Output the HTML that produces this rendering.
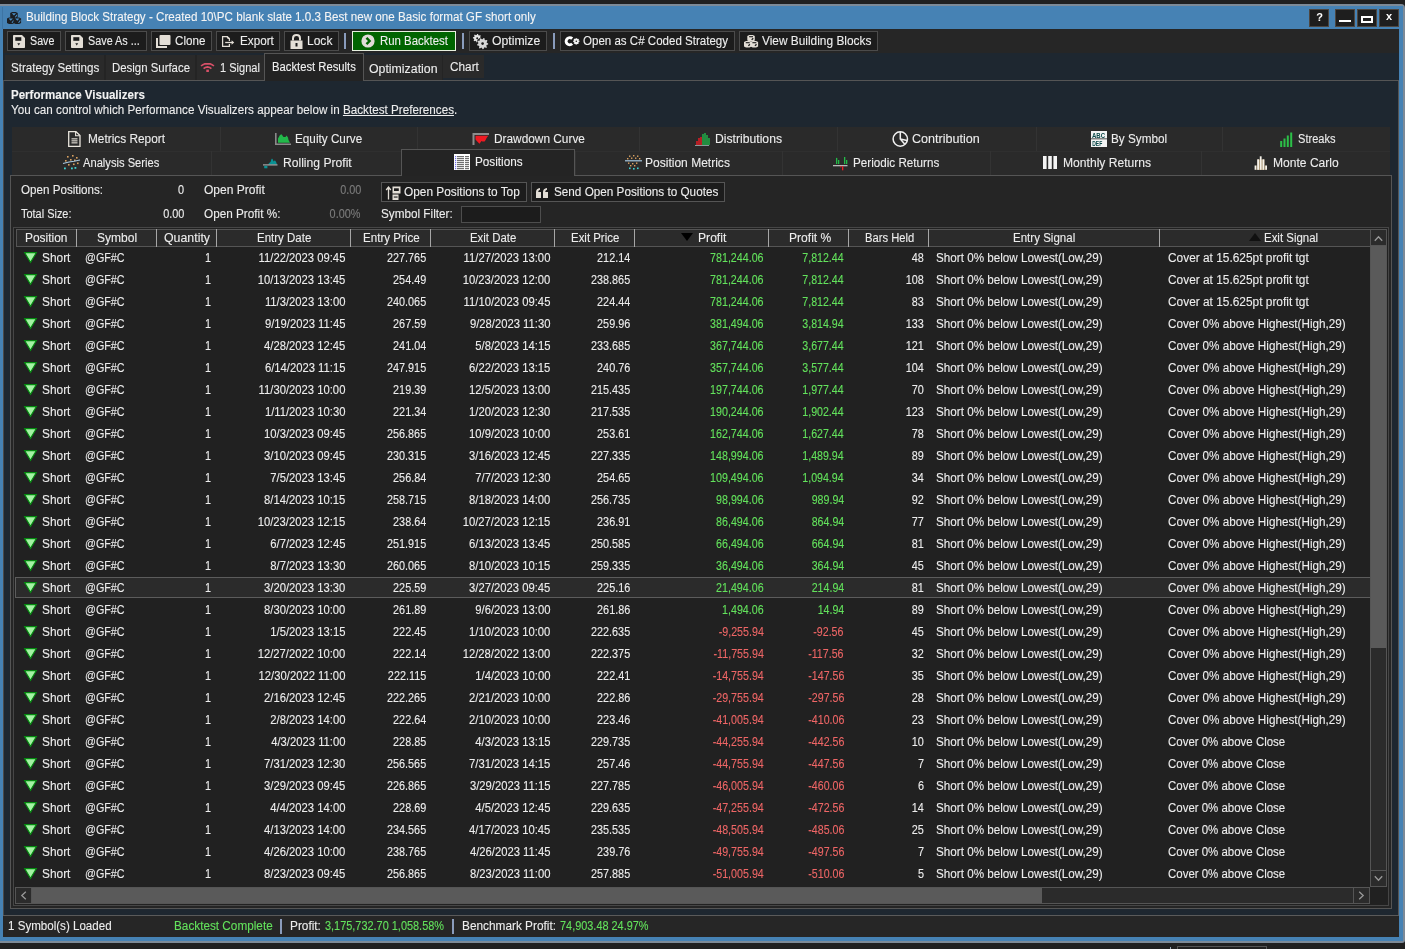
<!DOCTYPE html>
<html><head><meta charset="utf-8"><title>Building Block Strategy</title><style>
*{margin:0;padding:0;box-sizing:border-box}
html,body{width:1405px;height:949px;overflow:hidden;background:#202020;font-family:"Liberation Sans", sans-serif;}
.a{position:absolute}
.t{position:absolute;font-size:12.5px;line-height:14px;white-space:nowrap;color:#ededed;-webkit-text-stroke:0.1px currentColor}
svg{position:absolute;overflow:visible}
</style></head><body>
<div id="root" style="position:absolute;left:0;top:0;width:1405px;height:949px;overflow:hidden;will-change:transform">
<div class="a" style="left:-5px;top:4px;width:1410px;height:939px;background:#7d8a97;border-top-right-radius:4px;border-bottom-right-radius:3px"></div>
<div class="a" style="left:-5px;top:6px;width:1408px;height:935px;background:#4682b4"></div>
<div class="a" style="left:2px;top:7px;width:1px;height:22px;background:#3d74a3"></div>
<div class="a" style="left:1177px;top:946px;width:90px;height:10px;border:1px solid #555;"></div>
<div class="a" style="left:1170px;top:947px;width:1px;height:4px;background:#9ab"></div>
<svg style="left:7px;top:12px" width="15" height="13" viewBox="0 0 15 13"><g transform="translate(3.2,0)"><path d="M0 1 L2 0 L5.5 0 L7.5 1 L7.5 5.5 L5.5 6.6 L2 6.6 L0 5.5 Z" fill="#1b1e22"/><path d="M1.6 1.2 L5.9 1.2 L3.75 3.4 Z" fill="#4a90c8"/><path d="M4.6 5 L6.6 2.4 L6.9 3.7 L5.2 5.9 Z" fill="#4a90c8"/></g><g transform="translate(0,5.4)"><path d="M0 1 L2 0 L5.5 0 L7.5 1 L7.5 5.5 L5.5 6.6 L2 6.6 L0 5.5 Z" fill="#1b1e22"/><path d="M1.6 1.2 L5.9 1.2 L3.75 3.4 Z" fill="#4a90c8"/><path d="M4.6 5 L6.6 2.4 L6.9 3.7 L5.2 5.9 Z" fill="#4a90c8"/></g><g transform="translate(6.6,5.4)"><path d="M0 1 L2 0 L5.5 0 L7.5 1 L7.5 5.5 L5.5 6.6 L2 6.6 L0 5.5 Z" fill="#1b1e22"/><path d="M1.6 1.2 L5.9 1.2 L3.75 3.4 Z" fill="#4a90c8"/><path d="M4.6 5 L6.6 2.4 L6.9 3.7 L5.2 5.9 Z" fill="#4a90c8"/></g></svg>
<div class="t" style="font-size:12.5px;top:9.67px;color:#f4f4f4;left:25.80px;transform:scaleX(0.9310);transform-origin:0 0;">Building Block Strategy - Created 10\PC blank slate 1.0.3 Best new one Basic format GF short only</div>
<div class="a" style="left:1309px;top:9px;width:20px;height:18px;background:#1e1e1e;border:1px solid #4d4640"></div>
<div class="a" style="left:1335px;top:9px;width:20px;height:18px;background:#1e1e1e;border:1px solid #4d4640"></div>
<div class="a" style="left:1357px;top:9px;width:20px;height:18px;background:#1e1e1e;border:1px solid #4d4640"></div>
<div class="a" style="left:1379px;top:9px;width:20px;height:18px;background:#1e1e1e;border:1px solid #4d4640"></div>
<div class="a" style="left:1309px;top:9px;width:20px;height:17px;color:#fff;font:bold 11px/17px 'Liberation Sans',sans-serif;text-align:center;padding-left:1px">?</div>
<div class="a" style="left:1339px;top:19.5px;width:12px;height:2.5px;background:#fff"></div>
<div class="a" style="left:1361px;top:15.5px;width:12px;height:7.5px;border:2px solid #fff"></div>
<div class="a" style="left:1379px;top:8px;width:20px;height:17px;color:#fff;font:bold 11px/17px 'Liberation Sans',sans-serif;text-align:center">x</div>
<div class="a" style="left:3px;top:52px;width:1396px;height:863px;background:#1e2730"></div>
<div class="a" style="left:3px;top:29px;width:1396px;height:24px;background:#262626"></div>
<div class="a" style="left:7px;top:31px;width:54px;height:20px;background:#1c1c1c;border:1px solid #4b4b4b"></div>
<div class="t" style="font-size:12.5px;top:33.67px;color:#eeeeee;left:30.20px;transform:scaleX(0.8561);transform-origin:0 0;">Save</div>
<div class="a" style="left:65px;top:31px;width:82px;height:20px;background:#1c1c1c;border:1px solid #4b4b4b"></div>
<div class="t" style="font-size:12.5px;top:33.67px;color:#eeeeee;left:88.30px;transform:scaleX(0.8653);transform-origin:0 0;">Save As ...</div>
<div class="a" style="left:151px;top:31px;width:61px;height:20px;background:#1c1c1c;border:1px solid #4b4b4b"></div>
<div class="t" style="font-size:12.5px;top:33.67px;color:#eeeeee;left:174.90px;transform:scaleX(0.9305);transform-origin:0 0;">Clone</div>
<div class="a" style="left:216px;top:31px;width:64px;height:20px;background:#1c1c1c;border:1px solid #4b4b4b"></div>
<div class="t" style="font-size:12.5px;top:33.67px;color:#eeeeee;left:239.70px;transform:scaleX(0.9356);transform-origin:0 0;">Export</div>
<div class="a" style="left:284px;top:31px;width:55px;height:20px;background:#1c1c1c;border:1px solid #4b4b4b"></div>
<div class="t" style="font-size:12.5px;top:33.67px;color:#eeeeee;left:307.30px;transform:scaleX(0.9619);transform-origin:0 0;">Lock</div>
<div class="a" style="left:344px;top:33px;width:2px;height:16px;background:#8a9cbc"></div>
<div class="a" style="left:352px;top:31px;width:104px;height:20px;background:#006400;border:1px solid #e8f0e0"></div>
<div class="t" style="font-size:12.5px;top:33.67px;color:#eeeeee;left:379.60px;transform:scaleX(0.9133);transform-origin:0 0;">Run Backtest</div>
<div class="a" style="left:462px;top:33px;width:2px;height:16px;background:#8a9cbc"></div>
<div class="a" style="left:469px;top:31px;width:78px;height:20px;background:#1c1c1c;border:1px solid #4b4b4b"></div>
<div class="t" style="font-size:12.5px;top:33.67px;color:#eeeeee;left:492.40px;transform:scaleX(0.9774);transform-origin:0 0;">Optimize</div>
<div class="a" style="left:553px;top:33px;width:2px;height:16px;background:#8a9cbc"></div>
<div class="a" style="left:560px;top:31px;width:175px;height:20px;background:#1c1c1c;border:1px solid #4b4b4b"></div>
<div class="t" style="font-size:12.5px;top:33.67px;color:#eeeeee;left:583.40px;transform:scaleX(0.9234);transform-origin:0 0;">Open as C# Coded Strategy</div>
<div class="a" style="left:739px;top:31px;width:139px;height:20px;background:#1c1c1c;border:1px solid #4b4b4b"></div>
<div class="t" style="font-size:12.5px;top:33.67px;color:#eeeeee;left:761.80px;transform:scaleX(0.9500);transform-origin:0 0;">View Building Blocks</div>
<svg style="left:12.6px;top:35px" width="12" height="13" viewBox="0 0 12 13"><path d="M0 0.8 Q0 0 0.8 0 L9 0 L12 3 L12 12.2 Q12 13 11.2 13 L0.8 13 Q0 13 0 12.2Z" fill="#e3ded6"/><rect x="2.3" y="2.2" width="6" height="3.6" fill="#1c1c1c"/><path d="M4.3 8.3 L7.2 8.3 L5.75 10.6Z" fill="#1c1c1c"/></svg>
<svg style="left:70.6px;top:35px" width="12" height="13" viewBox="0 0 12 13"><path d="M0 0.8 Q0 0 0.8 0 L9 0 L12 3 L12 12.2 Q12 13 11.2 13 L0.8 13 Q0 13 0 12.2Z" fill="#e3ded6"/><rect x="2.3" y="2.2" width="6" height="3.6" fill="#1c1c1c"/><path d="M4.3 8.3 L7.2 8.3 L5.75 10.6Z" fill="#1c1c1c"/></svg>
<svg style="left:155.5px;top:35px" width="15" height="13" viewBox="0 0 15 13"><path d="M0 3 L0 13 L11 13 L11 11 L2 11 L2 3Z" fill="#e3ded6"/><rect x="3.5" y="0" width="11" height="10" rx="1" fill="#e3ded6"/></svg>
<svg style="left:222px;top:36px" width="13" height="11" viewBox="0 0 13 11"><path d="M7.4 5 L7.4 2.5 L5.3 0.6 L0.6 0.6 L0.6 10.4 L7.4 10.4 L7.4 8" fill="none" stroke="#e3ded6" stroke-width="1.25"/><path d="M5.3 0.6 Q5.1 2.7 7.4 2.5" fill="none" stroke="#e3ded6" stroke-width="1.1"/><path d="M3.2 6.5 L10.5 6.5" stroke="#e3ded6" stroke-width="1.3"/><path d="M9.6 4.2 L12.2 6.5 L9.6 8.8Z" fill="#e3ded6"/></svg>
<svg style="left:289.5px;top:34px" width="13" height="15" viewBox="0 0 13 15"><path d="M3 6.5 L3 4.2 Q3 1 6.5 1 Q10 1 10 4.2 L10 6.5" fill="none" stroke="#e3ded6" stroke-width="2"/><rect x="0.5" y="6.5" width="12" height="8.5" fill="#e3ded6"/><rect x="5.5" y="9" width="2" height="3.5" fill="#1c1c1c"/></svg>
<svg style="left:361px;top:34.3px" width="14" height="14" viewBox="0 0 14 14"><circle cx="7" cy="7" r="6.6" fill="#e0dcd8"/><path d="M5.5 3.8 L8.6 7 L5.5 10.2" fill="none" stroke="#006400" stroke-width="2.4"/></svg>
<svg style="left:473px;top:34px" width="16" height="16" viewBox="0 0 16 16"><polygon points="8.50,4.20 8.42,5.04 7.16,5.42 6.86,5.98 7.24,7.24 6.59,7.78 5.42,7.16 4.82,7.34 4.20,8.50 3.36,8.42 2.98,7.16 2.42,6.86 1.16,7.24 0.62,6.59 1.24,5.42 1.06,4.82 -0.10,4.20 -0.02,3.36 1.24,2.98 1.54,2.42 1.16,1.16 1.81,0.62 2.98,1.24 3.58,1.06 4.20,-0.10 5.04,-0.02 5.42,1.24 5.98,1.54 7.24,1.16 7.78,1.81 7.16,2.98 7.34,3.58" fill="#e6e6e6"/><circle cx="4.2" cy="4.2" r="1.0" fill="#1c1c1c"/><circle cx="9.6" cy="9.6" r="6.3" fill="#1c1c1c"/><polygon points="15.20,9.60 15.11,10.57 13.64,11.07 13.32,11.75 13.89,13.20 13.20,13.89 11.75,13.32 11.07,13.64 10.57,15.11 9.60,15.20 8.85,13.83 8.13,13.64 6.80,14.45 6.00,13.89 6.31,12.36 5.88,11.75 4.34,11.52 4.09,10.57 5.30,9.60 5.37,8.85 4.34,7.68 4.75,6.80 6.31,6.84 6.84,6.31 6.80,4.75 7.68,4.34 8.85,5.37 9.60,5.30 10.57,4.09 11.52,4.34 11.75,5.88 12.36,6.31 13.89,6.00 14.45,6.80 13.64,8.13 13.83,8.85" fill="#d6d6d6"/><circle cx="9.6" cy="9.6" r="1.3" fill="#1c1c1c"/></svg>
<svg style="left:564px;top:36px" width="16" height="11" viewBox="0 0 16 11"><path d="M8.2 2.6 A3.6 3.6 0 1 0 8.2 7.8" fill="none" stroke="#ffffff" stroke-width="2.9"/><path d="M12.3 2.2 L12.3 8.4 M9.2 5.3 L15.4 5.3 M10.1 3.1 L14.5 7.5 M14.5 3.1 L10.1 7.5" stroke="#f4f4f4" stroke-width="1.6"/><circle cx="12.3" cy="5.3" r="0.8" fill="#1c1c1c"/></svg>
<svg style="left:744px;top:35px" width="15" height="13" viewBox="0 0 15 13"><g transform="translate(3.3,0)"><path d="M0 1 L2 0 L5.5 0 L7.5 1 L7.5 5.5 L5.5 6.6 L2 6.6 L0 5.5 Z" fill="#e3ded6"/><path d="M1.8 1.7 L5.7 1.7" stroke="#1c1c1c" stroke-width="1.1"/><path d="M4.4 4.9 L5.9 3.2" stroke="#1c1c1c" stroke-width="1.3"/></g><g transform="translate(0,6)"><path d="M0 1 L2 0 L5.5 0 L7.5 1 L7.5 5.5 L5.5 6.6 L2 6.6 L0 5.5 Z" fill="#e3ded6"/><path d="M1.8 1.7 L5.7 1.7" stroke="#1c1c1c" stroke-width="1.1"/><path d="M4.4 4.9 L5.9 3.2" stroke="#1c1c1c" stroke-width="1.3"/></g><g transform="translate(6.6,6)"><path d="M0 1 L2 0 L5.5 0 L7.5 1 L7.5 5.5 L5.5 6.6 L2 6.6 L0 5.5 Z" fill="#e3ded6"/><path d="M1.8 1.7 L5.7 1.7" stroke="#1c1c1c" stroke-width="1.1"/><path d="M4.4 4.9 L5.9 3.2" stroke="#1c1c1c" stroke-width="1.3"/></g></svg>
<div class="a" style="left:5px;top:55px;width:260px;height:25px;background:#2a2a2a"></div>
<div class="a" style="left:104px;top:55px;width:2px;height:25px;background:#242424"></div>
<div class="a" style="left:195px;top:55px;width:2px;height:25px;background:#242424"></div>
<div class="a" style="left:364px;top:55px;width:79px;height:25px;background:#2a2a2a"></div>
<div class="a" style="left:443px;top:55px;width:41px;height:23px;background:#2a2a2a"></div>
<div class="a" style="left:442px;top:55px;width:1px;height:25px;background:#242424"></div>
<div class="t" style="font-size:12.5px;top:60.67px;left:11.10px;transform:scaleX(0.9276);transform-origin:0 0;">Strategy Settings</div>
<div class="t" style="font-size:12.5px;top:60.67px;left:111.50px;transform:scaleX(0.9126);transform-origin:0 0;">Design Surface</div>
<div class="t" style="font-size:12.5px;top:60.67px;left:219.90px;transform:scaleX(0.8852);transform-origin:0 0;">1 Signal</div>
<svg style="left:200px;top:62px" width="15" height="11" viewBox="0 0 15 11"><g fill="none" stroke="#d85068" stroke-width="1.6"><path d="M1 4 Q3 2.4 4.5 1.9 L10.5 1.9 Q12 2.4 14 4"/><path d="M3.6 6.6 Q5 5.2 7.5 4.9 Q10 5.2 11.4 6.6"/></g><rect x="6.3" y="7.6" width="2.6" height="2.4" fill="#d85068"/></svg>
<div class="a" style="left:264px;top:53px;width:100px;height:28px;background:#232323;border:1px solid #555;border-bottom:none"></div>
<div class="t" style="font-size:12.5px;top:59.67px;color:#f2f2f2;left:272.40px;transform:scaleX(0.9002);transform-origin:0 0;">Backtest Results</div>
<div class="t" style="font-size:12.5px;top:61.67px;left:368.50px;transform:scaleX(0.9861);transform-origin:0 0;">Optimization</div>
<div class="t" style="font-size:12.5px;top:59.67px;left:449.60px;transform:scaleX(0.9456);transform-origin:0 0;">Chart</div>
<div class="a" style="left:3px;top:80px;width:261px;height:1px;background:#555"></div>
<div class="a" style="left:364px;top:80px;width:1035px;height:1px;background:#555"></div>
<div class="a" style="left:3px;top:80px;width:1px;height:835px;background:#4a4a4a"></div>
<div class="a" style="left:1398px;top:80px;width:1px;height:835px;background:#555"></div>
<div class="t" style="font-size:12.5px;top:87.67px;color:#f2f2f2;font-weight:bold;left:10.60px;transform:scaleX(0.9235);transform-origin:0 0;">Performance Visualizers</div>
<div class="t" style="font-size:12.5px;top:102.67px;left:10.60px;transform:scaleX(0.9348);transform-origin:0 0;">You can control which Performance Visualizers appear below in <span style="text-decoration:underline">Backtest Preferences</span>.</div>
<div class="a" style="left:12px;top:127px;width:1378px;height:48px;background:#2a2a2a"></div>
<div class="t" style="font-size:12.5px;top:131.67px;left:87.50px;transform:scaleX(0.9477);transform-origin:0 0;">Metrics Report</div>
<div class="a" style="left:220px;top:127px;width:1px;height:24px;background:#333"></div>
<div class="t" style="font-size:12.5px;top:131.67px;left:295.30px;transform:scaleX(0.9390);transform-origin:0 0;">Equity Curve</div>
<div class="a" style="left:417px;top:127px;width:1px;height:24px;background:#333"></div>
<div class="t" style="font-size:12.5px;top:131.67px;left:493.60px;transform:scaleX(0.9481);transform-origin:0 0;">Drawdown Curve</div>
<div class="a" style="left:638.5px;top:127px;width:1px;height:24px;background:#333"></div>
<div class="t" style="font-size:12.5px;top:131.67px;left:714.50px;transform:scaleX(0.9741);transform-origin:0 0;">Distributions</div>
<div class="a" style="left:836.5px;top:127px;width:1px;height:24px;background:#333"></div>
<div class="t" style="font-size:12.5px;top:131.67px;left:912.30px;transform:scaleX(1.0044);transform-origin:0 0;">Contribution</div>
<div class="a" style="left:1036px;top:127px;width:1px;height:24px;background:#333"></div>
<div class="t" style="font-size:12.5px;top:131.67px;left:1111.10px;transform:scaleX(0.9389);transform-origin:0 0;">By Symbol</div>
<div class="a" style="left:1222px;top:127px;width:1px;height:24px;background:#333"></div>
<div class="t" style="font-size:12.5px;top:131.67px;left:1298.00px;transform:scaleX(0.8850);transform-origin:0 0;">Streaks</div>
<div class="a" style="left:12px;top:151px;width:1378px;height:1px;background:#2f2f2f"></div>
<div class="t" style="font-size:12.5px;top:155.67px;left:83.20px;transform:scaleX(0.8927);transform-origin:0 0;">Analysis Series</div>
<div class="a" style="left:210.5px;top:151px;width:1px;height:24px;background:#333"></div>
<div class="t" style="font-size:12.5px;top:155.67px;left:282.50px;transform:scaleX(0.9693);transform-origin:0 0;">Rolling Profit</div>
<div class="a" style="left:574.5px;top:151px;width:1px;height:24px;background:#333"></div>
<div class="t" style="font-size:12.5px;top:155.67px;left:645.30px;transform:scaleX(0.9624);transform-origin:0 0;">Position Metrics</div>
<div class="a" style="left:781.5px;top:151px;width:1px;height:24px;background:#333"></div>
<div class="t" style="font-size:12.5px;top:155.67px;left:853.00px;transform:scaleX(0.9339);transform-origin:0 0;">Periodic Returns</div>
<div class="a" style="left:989.5px;top:151px;width:1px;height:24px;background:#333"></div>
<div class="t" style="font-size:12.5px;top:155.67px;left:1062.50px;transform:scaleX(0.9681);transform-origin:0 0;">Monthly Returns</div>
<div class="a" style="left:1201px;top:151px;width:1px;height:24px;background:#333"></div>
<div class="t" style="font-size:12.5px;top:155.67px;left:1273.40px;transform:scaleX(0.9651);transform-origin:0 0;">Monte Carlo</div>
<div class="a" style="left:10px;top:175px;width:1382px;height:734px;background:#252525;border:1px solid #555"></div>
<div class="a" style="left:401px;top:149px;width:174px;height:27px;background:#242424;border:1px solid #555;border-bottom:none"></div>
<div class="t" style="font-size:12.5px;top:154.67px;color:#f2f2f2;left:474.70px;transform:scaleX(0.9382);transform-origin:0 0;">Positions</div>
<svg style="left:68.3px;top:131px" width="13" height="16" viewBox="0 0 13 16"><path d="M0.7 0.7 L8 0.7 L12 4.5 L12 15.3 L0.7 15.3Z" fill="none" stroke="#e8e4dc" stroke-width="1.3"/><path d="M7.6 0.9 L7.6 4.8 L11.8 4.8" fill="none" stroke="#e8e4dc" stroke-width="1.1"/><g fill="#e8e4dc"><rect x="3.5" y="7.3" width="6" height="1.1"/><rect x="3.5" y="9.3" width="6" height="1.1"/><rect x="3.5" y="11.3" width="6" height="1.1"/></g></svg>
<svg style="left:274.5px;top:133px" width="16" height="12" viewBox="0 0 16 12"><path d="M3 9.8 L3 5.5 L5 2 L6.5 1.3 L8.5 4 L10.5 4 L11.5 2.5 L13 4.5 L13.5 7 L15 9.8 Z" fill="#22b84a"/><path d="M0.8 0 L0.8 11.2 L16 11.2" fill="none" stroke="#8a8a8a" stroke-width="1.6"/></svg>
<svg style="left:472px;top:133px" width="17" height="12" viewBox="0 0 17 12"><path d="M1.5 12 L1.5 1 L17 1" fill="none" stroke="#8c8c8c" stroke-width="2"/><path d="M3.5 2.8 L16.2 2.8 L14.6 5 L13.6 7 L12.6 8.6 L10.5 8.6 L9.5 8 L7.5 10.7 L5 8.2 L3.5 6.5 Z" fill="#ee1a22"/></svg>
<svg style="left:695px;top:132px" width="14" height="14" viewBox="0 0 14 14"><rect x="1.3" y="9" width="1.4" height="4" fill="#f01c24"/><rect x="3.3" y="6" width="1.4" height="7" fill="#f01c24"/><rect x="5.3" y="5" width="1.4" height="8" fill="#f01c24"/><rect x="7.3" y="2" width="1.4" height="11" fill="#20b84a"/><rect x="9.3" y="1" width="1.4" height="12" fill="#20b84a"/><rect x="11.3" y="3" width="1.4" height="10" fill="#20b84a"/><rect x="13.3" y="6" width="1.4" height="7" fill="#20b84a"/><rect x="0" y="13" width="14" height="1" fill="#8a9a9a"/></svg>
<svg style="left:891.5px;top:131px" width="17" height="16" viewBox="0 0 17 16"><circle cx="8.3" cy="8" r="7.2" fill="none" stroke="#f0f0f0" stroke-width="1.5"/><path d="M8.3 1 L8.3 8 L15 9.5 M8.3 8 L12.8 13.3" fill="none" stroke="#f0f0f0" stroke-width="1.5"/></svg>
<svg style="left:1091px;top:131px" width="16" height="16" viewBox="0 0 16 16"><rect width="16" height="16" fill="#f4f4f4"/><rect x="0" y="7.2" width="16" height="1.2" fill="#6a6a6a"/><text x="1" y="6.6" textLength="13" lengthAdjust="spacingAndGlyphs" font-family="Liberation Sans" font-size="7.6" font-weight="bold" fill="#0a4848">ABC</text><text x="1.2" y="14.6" textLength="10" lengthAdjust="spacingAndGlyphs" font-family="Liberation Sans" font-size="7.6" font-weight="bold" fill="#0a4848">DEF</text></svg>
<svg style="left:1279.5px;top:132px" width="13" height="15" viewBox="0 0 13 15"><path d="M1.2 15 L1.2 9 M4.5 15 L4.5 6.5 M7.8 15 L7.8 3.5 M11.2 15 L11.2 0.5" stroke="#2cc048" stroke-width="2"/></svg>
<svg style="left:62.5px;top:155px" width="17" height="15" viewBox="0 0 17 15"><g fill="#d8a060"><rect x="4" y="1" width="1.6" height="1.6"/><rect x="9" y="0" width="1.6" height="1.6"/><rect x="13" y="2" width="1.6" height="1.6"/><rect x="2" y="5" width="1.6" height="1.6"/><rect x="7" y="4" width="1.6" height="1.6"/><rect x="11" y="4.5" width="1.6" height="1.6"/><rect x="5" y="9" width="1.6" height="1.6"/><rect x="10" y="8.5" width="1.6" height="1.6"/><rect x="14" y="7.5" width="1.6" height="1.6"/></g><path d="M0 8.5 L6 7 L11 6.2 L17 5" stroke="#a8c8e0" stroke-width="1.1" fill="none"/><g fill="#40d0d0"><rect x="1" y="12.5" width="1.8" height="1.8"/><rect x="8" y="12.5" width="1.8" height="1.8"/><rect x="11.5" y="12" width="1.8" height="1.8"/></g></svg>
<svg style="left:263px;top:157.5px" width="15" height="11" viewBox="0 0 15 11"><path d="M5 6.6 L6.2 5 L7.5 4 L8.3 1.5 L9 0.4 L10 1.8 L10.5 3.5 L11.5 2.5 L12.4 2.7 L13.4 4.8 L14 6.6Z" fill="#0a9294"/><path d="M0 6.9 L14.5 6.9" stroke="#a8a8a8" stroke-width="1.2"/><rect x="1.2" y="7.9" width="3.2" height="2.4" fill="#0a9294"/></svg>
<svg style="left:454px;top:154px" width="16" height="16" viewBox="0 0 16 16"><rect width="16" height="16" fill="#ffffff"/><rect x="1" y="2" width="1.2" height="1.2" fill="#7070f0"/><rect x="3" y="2" width="7" height="1.2" fill="#707070"/><rect x="11" y="2" width="4" height="1.2" fill="#707070"/><rect x="1" y="4" width="1.2" height="1.2" fill="#7070f0"/><rect x="3" y="4" width="7" height="1.2" fill="#707070"/><rect x="11" y="4" width="4" height="1.2" fill="#707070"/><rect x="1" y="6" width="1.2" height="1.2" fill="#7070f0"/><rect x="3" y="6" width="7" height="1.2" fill="#707070"/><rect x="11" y="6" width="4" height="1.2" fill="#707070"/><rect x="1" y="8" width="1.2" height="1.2" fill="#7070f0"/><rect x="3" y="8" width="7" height="1.2" fill="#707070"/><rect x="11" y="8" width="4" height="1.2" fill="#707070"/><rect x="1" y="10" width="1.2" height="1.2" fill="#7070f0"/><rect x="3" y="10" width="7" height="1.2" fill="#707070"/><rect x="11" y="10" width="4" height="1.2" fill="#707070"/><rect x="1" y="12" width="1.2" height="1.2" fill="#7070f0"/><rect x="3" y="12" width="7" height="1.2" fill="#707070"/><rect x="11" y="12" width="4" height="1.2" fill="#707070"/><rect x="1" y="14" width="1.2" height="1.2" fill="#7070f0"/><rect x="3" y="14" width="7" height="1.2" fill="#707070"/><rect x="11" y="14" width="4" height="1.2" fill="#707070"/></svg>
<svg style="left:624.5px;top:155px" width="17" height="15" viewBox="0 0 17 15"><g fill="#d8a060"><rect x="4" y="0.5" width="1.4" height="1.4"/><rect x="8" y="0" width="1.4" height="1.4"/><rect x="12" y="0.5" width="1.4" height="1.4"/><rect x="2" y="3" width="1.4" height="1.4"/><rect x="6" y="2.5" width="1.4" height="1.4"/><rect x="10" y="2.5" width="1.4" height="1.4"/><rect x="14" y="3" width="1.4" height="1.4"/><rect x="3" y="7.5" width="1.4" height="1.4"/><rect x="7" y="8" width="1.4" height="1.4"/><rect x="11" y="7.5" width="1.4" height="1.4"/><rect x="5" y="10" width="1.4" height="1.4"/><rect x="9" y="10" width="1.4" height="1.4"/></g><path d="M0 5.8 L17 5.8" stroke="#a8c8e0" stroke-width="1.2"/><g fill="#40d0d0"><rect x="4" y="12.5" width="1.6" height="1.6"/><rect x="8" y="13" width="1.6" height="1.6"/><rect x="12" y="12.5" width="1.6" height="1.6"/></g></svg>
<svg style="left:833px;top:157px" width="15" height="14" viewBox="0 0 15 14"><g fill="#22bb48"><rect x="3" y="0.9" width="1.3" height="6.1"/><rect x="5" y="3" width="1.3" height="4"/><rect x="11" y="0" width="1.3" height="7"/><rect x="13" y="3" width="1.3" height="4"/></g><rect x="0" y="8" width="14.5" height="1.3" fill="#b8b8b8"/><g fill="#f01c24"><rect x="7" y="9.3" width="1.3" height="1"/><rect x="9" y="9.3" width="1.3" height="4"/></g></svg>
<svg style="left:1042.5px;top:156px" width="14" height="13" viewBox="0 0 14 13"><path d="M0 0 L3.6 0 L3.6 13 L0 13Z M5.2 0 L8.8 0 L8.8 13 L5.2 13Z M10.4 0 L14 0 L14 13 L10.4 13Z" fill="#f4f4f4"/></svg>
<svg style="left:1254px;top:155.5px" width="14" height="14" viewBox="0 0 14 14"><rect x="1.5" y="9.5" width="11" height="4.5" fill="#5a4c34"/><rect x="3.5" y="3.5" width="7" height="10.5" fill="#9a8460"/><g fill="#f6f2ea"><rect x="0.6" y="9.5" width="1.8" height="4.3"/><rect x="3.2" y="3.3" width="1.8" height="10.5"/><rect x="5.8" y="0.3" width="1.8" height="13.5"/><rect x="8.5" y="3.3" width="1.8" height="10.5"/><rect x="11.2" y="9.5" width="1.8" height="4.3"/></g></svg>
<div class="t" style="font-size:12.5px;top:182.67px;left:21.40px;transform:scaleX(0.9303);transform-origin:0 0;">Open Positions:</div>
<div class="t" style="font-size:12.5px;top:182.67px;right:1221.00px;transform:scaleX(0.8700);transform-origin:100% 0;">0</div>
<div class="t" style="font-size:12.5px;top:182.67px;left:204.30px;transform:scaleX(0.9617);transform-origin:0 0;">Open Profit</div>
<div class="t" style="font-size:12.5px;top:182.67px;color:#7c7c7c;right:1044.10px;transform:scaleX(0.8700);transform-origin:100% 0;">0.00</div>
<div class="t" style="font-size:12.5px;top:206.67px;left:21.40px;transform:scaleX(0.8756);transform-origin:0 0;">Total Size:</div>
<div class="t" style="font-size:12.5px;top:206.67px;right:1221.00px;transform:scaleX(0.8700);transform-origin:100% 0;">0.00</div>
<div class="t" style="font-size:12.5px;top:206.67px;left:204.30px;transform:scaleX(0.9401);transform-origin:0 0;">Open Profit %:</div>
<div class="t" style="font-size:12.5px;top:206.67px;color:#7c7c7c;right:1044.10px;transform:scaleX(0.8700);transform-origin:100% 0;">0.00%</div>
<div class="a" style="left:381px;top:182px;width:146px;height:20px;background:#1c1c1c;border:1px solid #555"></div>
<div class="t" style="font-size:12.5px;top:184.67px;left:404.40px;transform:scaleX(0.9486);transform-origin:0 0;">Open Positions to Top</div>
<svg style="left:385.5px;top:185.5px" width="14" height="14" viewBox="0 0 14 14"><path d="M2.5 13.5 L2.5 1.5 M0.2 4 L2.5 1 L4.8 4" fill="none" stroke="#e3ded6" stroke-width="1.3"/><rect x="6.5" y="0.5" width="8" height="7" fill="#e3ded6"/><rect x="8" y="2.3" width="4.8" height="2.7" fill="#1c1c1c"/><rect x="6.5" y="8.5" width="6" height="5.5" fill="#e3ded6"/><rect x="7.8" y="10.5" width="3.8" height="1.1" fill="#1c1c1c"/></svg>
<div class="a" style="left:531px;top:182px;width:194px;height:20px;background:#1c1c1c;border:1px solid #555"></div>
<div class="t" style="font-size:12.5px;top:184.67px;left:554.20px;transform:scaleX(0.9383);transform-origin:0 0;">Send Open Positions to Quotes</div>
<svg style="left:536px;top:187.5px" width="13" height="10" viewBox="0 0 13 10"><path d="M0 4 Q0 0.5 4 0 L4 1.8 Q2.2 2 2.2 4 L5 4 L5 10 L0 10Z M7 4 Q7 0.5 11 0 L11 1.8 Q9.2 2 9.2 4 L12 4 L12 10 L7 10Z" fill="#e3ded6"/></svg>
<div class="t" style="font-size:12.5px;top:206.67px;left:381.40px;transform:scaleX(0.9384);transform-origin:0 0;">Symbol Filter:</div>
<div class="a" style="left:461px;top:206px;width:80px;height:17px;background:#1c1c1c;border:1px solid #4d4d4d"></div>
<div class="a" style="left:13px;top:227px;width:1376px;height:679px;background:#212121;border:1px solid #464646"></div>
<div class="a" style="left:16px;top:229px;width:1354px;height:18px;background:#2b2b2b;border-top:1px solid #555;border-bottom:1px solid #555"></div>
<div class="a" style="left:16px;top:229px;width:1px;height:18px;background:#555"></div>
<div class="a" style="left:76px;top:229px;width:1px;height:18px;background:#a6a6a6"></div>
<div class="a" style="left:156px;top:229px;width:1px;height:18px;background:#a6a6a6"></div>
<div class="a" style="left:216px;top:229px;width:1px;height:18px;background:#a6a6a6"></div>
<div class="a" style="left:350px;top:229px;width:1px;height:18px;background:#a6a6a6"></div>
<div class="a" style="left:430px;top:229px;width:1px;height:18px;background:#a6a6a6"></div>
<div class="a" style="left:554px;top:229px;width:1px;height:18px;background:#a6a6a6"></div>
<div class="a" style="left:634px;top:229px;width:1px;height:18px;background:#a6a6a6"></div>
<div class="a" style="left:768px;top:229px;width:1px;height:18px;background:#a6a6a6"></div>
<div class="a" style="left:848px;top:229px;width:1px;height:18px;background:#a6a6a6"></div>
<div class="a" style="left:928px;top:229px;width:1px;height:18px;background:#a6a6a6"></div>
<div class="a" style="left:1159px;top:229px;width:1px;height:18px;background:#a6a6a6"></div>
<div class="t" style="font-size:12.5px;top:230.67px;left:25.30px;transform:scaleX(0.9531);transform-origin:0 0;">Position</div>
<div class="t" style="font-size:12.5px;top:230.67px;left:96.90px;transform:scaleX(0.9619);transform-origin:0 0;">Symbol</div>
<div class="t" style="font-size:12.5px;top:230.67px;left:164.20px;transform:scaleX(0.9883);transform-origin:0 0;">Quantity</div>
<div class="t" style="font-size:12.5px;top:230.67px;left:257.30px;transform:scaleX(0.9196);transform-origin:0 0;">Entry Date</div>
<div class="t" style="font-size:12.5px;top:230.67px;left:363.10px;transform:scaleX(0.9276);transform-origin:0 0;">Entry Price</div>
<div class="t" style="font-size:12.5px;top:230.67px;left:470.10px;transform:scaleX(0.9129);transform-origin:0 0;">Exit Date</div>
<div class="t" style="font-size:12.5px;top:230.67px;left:571.20px;transform:scaleX(0.9148);transform-origin:0 0;">Exit Price</div>
<div class="t" style="font-size:12.5px;top:230.67px;left:697.90px;transform:scaleX(0.9701);transform-origin:0 0;">Profit</div>
<div class="t" style="font-size:12.5px;top:230.67px;left:788.50px;transform:scaleX(0.9669);transform-origin:0 0;">Profit %</div>
<div class="t" style="font-size:12.5px;top:230.67px;left:864.70px;transform:scaleX(0.8963);transform-origin:0 0;">Bars Held</div>
<div class="t" style="font-size:12.5px;top:230.67px;left:1013.30px;transform:scaleX(0.9228);transform-origin:0 0;">Entry Signal</div>
<div class="t" style="font-size:12.5px;top:230.67px;left:1264.20px;transform:scaleX(0.9157);transform-origin:0 0;">Exit Signal</div>
<svg style="left:681px;top:233px" width="12" height="8" viewBox="0 0 12 8"><path d="M0 0 L12 0 L6 8Z" fill="#000"/></svg>
<svg style="left:1248.5px;top:232.5px" width="12" height="8" viewBox="0 0 12 8"><path d="M0 8 L12 8 L6 0Z" fill="#111"/></svg>
<svg style="left:24px;top:252px" width="13" height="11" viewBox="0 0 13 11"><path d="M0.6 0.6 L12.4 0.6 L6.5 10.4Z" fill="#a4f2a4" stroke="#058a10" stroke-width="1.1" stroke-linejoin="miter"/></svg>
<div class="t" style="font-size:12.5px;top:250.67px;left:42.20px;transform:scaleX(0.9506);transform-origin:0 0;">Short</div>
<div class="t" style="font-size:12.5px;top:250.67px;left:84.60px;transform:scaleX(0.8581);transform-origin:0 0;">@GF#C</div>
<div class="t" style="font-size:12.5px;top:250.67px;right:1194.00px;transform:scaleX(0.8685);transform-origin:100% 0;">1</div>
<div class="t" style="font-size:12.5px;top:250.67px;right:1059.60px;transform:scaleX(0.9005);transform-origin:100% 0;">11/22/2023 09:45</div>
<div class="t" style="font-size:12.5px;top:250.67px;right:979.10px;transform:scaleX(0.8675);transform-origin:100% 0;">227.765</div>
<div class="t" style="font-size:12.5px;top:250.67px;right:855.00px;transform:scaleX(0.9005);transform-origin:100% 0;">11/27/2023 13:00</div>
<div class="t" style="font-size:12.5px;top:250.67px;right:775.00px;transform:scaleX(0.8675);transform-origin:100% 0;">212.14</div>
<div class="t" style="font-size:12.5px;top:250.67px;color:#63e25c;right:641.00px;transform:scaleX(0.8551);transform-origin:100% 0;">781,244.06</div>
<div class="t" style="font-size:12.5px;top:250.67px;color:#63e25c;right:561.10px;transform:scaleX(0.8509);transform-origin:100% 0;">7,812.44</div>
<div class="t" style="font-size:12.5px;top:250.67px;right:481.00px;transform:scaleX(0.8685);transform-origin:100% 0;">48</div>
<div class="t" style="font-size:12.5px;top:250.67px;left:936.20px;transform:scaleX(0.9336);transform-origin:0 0;">Short 0% below Lowest(Low,29)</div>
<div class="t" style="font-size:12.5px;top:250.67px;left:1167.60px;transform:scaleX(0.9509);transform-origin:0 0;">Cover at 15.625pt profit tgt</div>
<svg style="left:24px;top:274px" width="13" height="11" viewBox="0 0 13 11"><path d="M0.6 0.6 L12.4 0.6 L6.5 10.4Z" fill="#a4f2a4" stroke="#058a10" stroke-width="1.1" stroke-linejoin="miter"/></svg>
<div class="t" style="font-size:12.5px;top:272.67px;left:42.20px;transform:scaleX(0.9506);transform-origin:0 0;">Short</div>
<div class="t" style="font-size:12.5px;top:272.67px;left:84.60px;transform:scaleX(0.8581);transform-origin:0 0;">@GF#C</div>
<div class="t" style="font-size:12.5px;top:272.67px;right:1194.00px;transform:scaleX(0.8685);transform-origin:100% 0;">1</div>
<div class="t" style="font-size:12.5px;top:272.67px;right:1059.60px;transform:scaleX(0.9005);transform-origin:100% 0;">10/13/2023 13:45</div>
<div class="t" style="font-size:12.5px;top:272.67px;right:979.10px;transform:scaleX(0.8675);transform-origin:100% 0;">254.49</div>
<div class="t" style="font-size:12.5px;top:272.67px;right:855.00px;transform:scaleX(0.9005);transform-origin:100% 0;">10/23/2023 12:00</div>
<div class="t" style="font-size:12.5px;top:272.67px;right:775.00px;transform:scaleX(0.8675);transform-origin:100% 0;">238.865</div>
<div class="t" style="font-size:12.5px;top:272.67px;color:#63e25c;right:641.00px;transform:scaleX(0.8551);transform-origin:100% 0;">781,244.06</div>
<div class="t" style="font-size:12.5px;top:272.67px;color:#63e25c;right:561.10px;transform:scaleX(0.8509);transform-origin:100% 0;">7,812.44</div>
<div class="t" style="font-size:12.5px;top:272.67px;right:481.00px;transform:scaleX(0.8685);transform-origin:100% 0;">108</div>
<div class="t" style="font-size:12.5px;top:272.67px;left:936.20px;transform:scaleX(0.9336);transform-origin:0 0;">Short 0% below Lowest(Low,29)</div>
<div class="t" style="font-size:12.5px;top:272.67px;left:1167.60px;transform:scaleX(0.9509);transform-origin:0 0;">Cover at 15.625pt profit tgt</div>
<svg style="left:24px;top:296px" width="13" height="11" viewBox="0 0 13 11"><path d="M0.6 0.6 L12.4 0.6 L6.5 10.4Z" fill="#a4f2a4" stroke="#058a10" stroke-width="1.1" stroke-linejoin="miter"/></svg>
<div class="t" style="font-size:12.5px;top:294.67px;left:42.20px;transform:scaleX(0.9506);transform-origin:0 0;">Short</div>
<div class="t" style="font-size:12.5px;top:294.67px;left:84.60px;transform:scaleX(0.8581);transform-origin:0 0;">@GF#C</div>
<div class="t" style="font-size:12.5px;top:294.67px;right:1194.00px;transform:scaleX(0.8685);transform-origin:100% 0;">1</div>
<div class="t" style="font-size:12.5px;top:294.67px;right:1059.60px;transform:scaleX(0.9005);transform-origin:100% 0;">11/3/2023 13:00</div>
<div class="t" style="font-size:12.5px;top:294.67px;right:979.10px;transform:scaleX(0.8675);transform-origin:100% 0;">240.065</div>
<div class="t" style="font-size:12.5px;top:294.67px;right:855.00px;transform:scaleX(0.9005);transform-origin:100% 0;">11/10/2023 09:45</div>
<div class="t" style="font-size:12.5px;top:294.67px;right:775.00px;transform:scaleX(0.8675);transform-origin:100% 0;">224.44</div>
<div class="t" style="font-size:12.5px;top:294.67px;color:#63e25c;right:641.00px;transform:scaleX(0.8551);transform-origin:100% 0;">781,244.06</div>
<div class="t" style="font-size:12.5px;top:294.67px;color:#63e25c;right:561.10px;transform:scaleX(0.8509);transform-origin:100% 0;">7,812.44</div>
<div class="t" style="font-size:12.5px;top:294.67px;right:481.00px;transform:scaleX(0.8685);transform-origin:100% 0;">83</div>
<div class="t" style="font-size:12.5px;top:294.67px;left:936.20px;transform:scaleX(0.9336);transform-origin:0 0;">Short 0% below Lowest(Low,29)</div>
<div class="t" style="font-size:12.5px;top:294.67px;left:1167.60px;transform:scaleX(0.9509);transform-origin:0 0;">Cover at 15.625pt profit tgt</div>
<svg style="left:24px;top:318px" width="13" height="11" viewBox="0 0 13 11"><path d="M0.6 0.6 L12.4 0.6 L6.5 10.4Z" fill="#a4f2a4" stroke="#058a10" stroke-width="1.1" stroke-linejoin="miter"/></svg>
<div class="t" style="font-size:12.5px;top:316.67px;left:42.20px;transform:scaleX(0.9506);transform-origin:0 0;">Short</div>
<div class="t" style="font-size:12.5px;top:316.67px;left:84.60px;transform:scaleX(0.8581);transform-origin:0 0;">@GF#C</div>
<div class="t" style="font-size:12.5px;top:316.67px;right:1194.00px;transform:scaleX(0.8685);transform-origin:100% 0;">1</div>
<div class="t" style="font-size:12.5px;top:316.67px;right:1059.60px;transform:scaleX(0.9005);transform-origin:100% 0;">9/19/2023 11:45</div>
<div class="t" style="font-size:12.5px;top:316.67px;right:979.10px;transform:scaleX(0.8675);transform-origin:100% 0;">267.59</div>
<div class="t" style="font-size:12.5px;top:316.67px;right:855.00px;transform:scaleX(0.9005);transform-origin:100% 0;">9/28/2023 11:30</div>
<div class="t" style="font-size:12.5px;top:316.67px;right:775.00px;transform:scaleX(0.8675);transform-origin:100% 0;">259.96</div>
<div class="t" style="font-size:12.5px;top:316.67px;color:#63e25c;right:641.00px;transform:scaleX(0.8551);transform-origin:100% 0;">381,494.06</div>
<div class="t" style="font-size:12.5px;top:316.67px;color:#63e25c;right:561.10px;transform:scaleX(0.8509);transform-origin:100% 0;">3,814.94</div>
<div class="t" style="font-size:12.5px;top:316.67px;right:481.00px;transform:scaleX(0.8685);transform-origin:100% 0;">133</div>
<div class="t" style="font-size:12.5px;top:316.67px;left:936.20px;transform:scaleX(0.9336);transform-origin:0 0;">Short 0% below Lowest(Low,29)</div>
<div class="t" style="font-size:12.5px;top:316.67px;left:1167.60px;transform:scaleX(0.9369);transform-origin:0 0;">Cover 0% above Highest(High,29)</div>
<svg style="left:24px;top:340px" width="13" height="11" viewBox="0 0 13 11"><path d="M0.6 0.6 L12.4 0.6 L6.5 10.4Z" fill="#a4f2a4" stroke="#058a10" stroke-width="1.1" stroke-linejoin="miter"/></svg>
<div class="t" style="font-size:12.5px;top:338.67px;left:42.20px;transform:scaleX(0.9506);transform-origin:0 0;">Short</div>
<div class="t" style="font-size:12.5px;top:338.67px;left:84.60px;transform:scaleX(0.8581);transform-origin:0 0;">@GF#C</div>
<div class="t" style="font-size:12.5px;top:338.67px;right:1194.00px;transform:scaleX(0.8685);transform-origin:100% 0;">1</div>
<div class="t" style="font-size:12.5px;top:338.67px;right:1059.60px;transform:scaleX(0.9005);transform-origin:100% 0;">4/28/2023 12:45</div>
<div class="t" style="font-size:12.5px;top:338.67px;right:979.10px;transform:scaleX(0.8675);transform-origin:100% 0;">241.04</div>
<div class="t" style="font-size:12.5px;top:338.67px;right:855.00px;transform:scaleX(0.9005);transform-origin:100% 0;">5/8/2023 14:15</div>
<div class="t" style="font-size:12.5px;top:338.67px;right:775.00px;transform:scaleX(0.8675);transform-origin:100% 0;">233.685</div>
<div class="t" style="font-size:12.5px;top:338.67px;color:#63e25c;right:641.00px;transform:scaleX(0.8551);transform-origin:100% 0;">367,744.06</div>
<div class="t" style="font-size:12.5px;top:338.67px;color:#63e25c;right:561.10px;transform:scaleX(0.8509);transform-origin:100% 0;">3,677.44</div>
<div class="t" style="font-size:12.5px;top:338.67px;right:481.00px;transform:scaleX(0.8685);transform-origin:100% 0;">121</div>
<div class="t" style="font-size:12.5px;top:338.67px;left:936.20px;transform:scaleX(0.9336);transform-origin:0 0;">Short 0% below Lowest(Low,29)</div>
<div class="t" style="font-size:12.5px;top:338.67px;left:1167.60px;transform:scaleX(0.9369);transform-origin:0 0;">Cover 0% above Highest(High,29)</div>
<svg style="left:24px;top:362px" width="13" height="11" viewBox="0 0 13 11"><path d="M0.6 0.6 L12.4 0.6 L6.5 10.4Z" fill="#a4f2a4" stroke="#058a10" stroke-width="1.1" stroke-linejoin="miter"/></svg>
<div class="t" style="font-size:12.5px;top:360.67px;left:42.20px;transform:scaleX(0.9506);transform-origin:0 0;">Short</div>
<div class="t" style="font-size:12.5px;top:360.67px;left:84.60px;transform:scaleX(0.8581);transform-origin:0 0;">@GF#C</div>
<div class="t" style="font-size:12.5px;top:360.67px;right:1194.00px;transform:scaleX(0.8685);transform-origin:100% 0;">1</div>
<div class="t" style="font-size:12.5px;top:360.67px;right:1059.60px;transform:scaleX(0.9005);transform-origin:100% 0;">6/14/2023 11:15</div>
<div class="t" style="font-size:12.5px;top:360.67px;right:979.10px;transform:scaleX(0.8675);transform-origin:100% 0;">247.915</div>
<div class="t" style="font-size:12.5px;top:360.67px;right:855.00px;transform:scaleX(0.9005);transform-origin:100% 0;">6/22/2023 13:15</div>
<div class="t" style="font-size:12.5px;top:360.67px;right:775.00px;transform:scaleX(0.8675);transform-origin:100% 0;">240.76</div>
<div class="t" style="font-size:12.5px;top:360.67px;color:#63e25c;right:641.00px;transform:scaleX(0.8551);transform-origin:100% 0;">357,744.06</div>
<div class="t" style="font-size:12.5px;top:360.67px;color:#63e25c;right:561.10px;transform:scaleX(0.8509);transform-origin:100% 0;">3,577.44</div>
<div class="t" style="font-size:12.5px;top:360.67px;right:481.00px;transform:scaleX(0.8685);transform-origin:100% 0;">104</div>
<div class="t" style="font-size:12.5px;top:360.67px;left:936.20px;transform:scaleX(0.9336);transform-origin:0 0;">Short 0% below Lowest(Low,29)</div>
<div class="t" style="font-size:12.5px;top:360.67px;left:1167.60px;transform:scaleX(0.9369);transform-origin:0 0;">Cover 0% above Highest(High,29)</div>
<svg style="left:24px;top:384px" width="13" height="11" viewBox="0 0 13 11"><path d="M0.6 0.6 L12.4 0.6 L6.5 10.4Z" fill="#a4f2a4" stroke="#058a10" stroke-width="1.1" stroke-linejoin="miter"/></svg>
<div class="t" style="font-size:12.5px;top:382.67px;left:42.20px;transform:scaleX(0.9506);transform-origin:0 0;">Short</div>
<div class="t" style="font-size:12.5px;top:382.67px;left:84.60px;transform:scaleX(0.8581);transform-origin:0 0;">@GF#C</div>
<div class="t" style="font-size:12.5px;top:382.67px;right:1194.00px;transform:scaleX(0.8685);transform-origin:100% 0;">1</div>
<div class="t" style="font-size:12.5px;top:382.67px;right:1059.60px;transform:scaleX(0.9005);transform-origin:100% 0;">11/30/2023 10:00</div>
<div class="t" style="font-size:12.5px;top:382.67px;right:979.10px;transform:scaleX(0.8675);transform-origin:100% 0;">219.39</div>
<div class="t" style="font-size:12.5px;top:382.67px;right:855.00px;transform:scaleX(0.9005);transform-origin:100% 0;">12/5/2023 13:00</div>
<div class="t" style="font-size:12.5px;top:382.67px;right:775.00px;transform:scaleX(0.8675);transform-origin:100% 0;">215.435</div>
<div class="t" style="font-size:12.5px;top:382.67px;color:#63e25c;right:641.00px;transform:scaleX(0.8551);transform-origin:100% 0;">197,744.06</div>
<div class="t" style="font-size:12.5px;top:382.67px;color:#63e25c;right:561.10px;transform:scaleX(0.8509);transform-origin:100% 0;">1,977.44</div>
<div class="t" style="font-size:12.5px;top:382.67px;right:481.00px;transform:scaleX(0.8685);transform-origin:100% 0;">70</div>
<div class="t" style="font-size:12.5px;top:382.67px;left:936.20px;transform:scaleX(0.9336);transform-origin:0 0;">Short 0% below Lowest(Low,29)</div>
<div class="t" style="font-size:12.5px;top:382.67px;left:1167.60px;transform:scaleX(0.9369);transform-origin:0 0;">Cover 0% above Highest(High,29)</div>
<svg style="left:24px;top:406px" width="13" height="11" viewBox="0 0 13 11"><path d="M0.6 0.6 L12.4 0.6 L6.5 10.4Z" fill="#a4f2a4" stroke="#058a10" stroke-width="1.1" stroke-linejoin="miter"/></svg>
<div class="t" style="font-size:12.5px;top:404.67px;left:42.20px;transform:scaleX(0.9506);transform-origin:0 0;">Short</div>
<div class="t" style="font-size:12.5px;top:404.67px;left:84.60px;transform:scaleX(0.8581);transform-origin:0 0;">@GF#C</div>
<div class="t" style="font-size:12.5px;top:404.67px;right:1194.00px;transform:scaleX(0.8685);transform-origin:100% 0;">1</div>
<div class="t" style="font-size:12.5px;top:404.67px;right:1059.60px;transform:scaleX(0.9005);transform-origin:100% 0;">1/11/2023 10:30</div>
<div class="t" style="font-size:12.5px;top:404.67px;right:979.10px;transform:scaleX(0.8675);transform-origin:100% 0;">221.34</div>
<div class="t" style="font-size:12.5px;top:404.67px;right:855.00px;transform:scaleX(0.9005);transform-origin:100% 0;">1/20/2023 12:30</div>
<div class="t" style="font-size:12.5px;top:404.67px;right:775.00px;transform:scaleX(0.8675);transform-origin:100% 0;">217.535</div>
<div class="t" style="font-size:12.5px;top:404.67px;color:#63e25c;right:641.00px;transform:scaleX(0.8551);transform-origin:100% 0;">190,244.06</div>
<div class="t" style="font-size:12.5px;top:404.67px;color:#63e25c;right:561.10px;transform:scaleX(0.8509);transform-origin:100% 0;">1,902.44</div>
<div class="t" style="font-size:12.5px;top:404.67px;right:481.00px;transform:scaleX(0.8685);transform-origin:100% 0;">123</div>
<div class="t" style="font-size:12.5px;top:404.67px;left:936.20px;transform:scaleX(0.9336);transform-origin:0 0;">Short 0% below Lowest(Low,29)</div>
<div class="t" style="font-size:12.5px;top:404.67px;left:1167.60px;transform:scaleX(0.9369);transform-origin:0 0;">Cover 0% above Highest(High,29)</div>
<svg style="left:24px;top:428px" width="13" height="11" viewBox="0 0 13 11"><path d="M0.6 0.6 L12.4 0.6 L6.5 10.4Z" fill="#a4f2a4" stroke="#058a10" stroke-width="1.1" stroke-linejoin="miter"/></svg>
<div class="t" style="font-size:12.5px;top:426.67px;left:42.20px;transform:scaleX(0.9506);transform-origin:0 0;">Short</div>
<div class="t" style="font-size:12.5px;top:426.67px;left:84.60px;transform:scaleX(0.8581);transform-origin:0 0;">@GF#C</div>
<div class="t" style="font-size:12.5px;top:426.67px;right:1194.00px;transform:scaleX(0.8685);transform-origin:100% 0;">1</div>
<div class="t" style="font-size:12.5px;top:426.67px;right:1059.60px;transform:scaleX(0.9005);transform-origin:100% 0;">10/3/2023 09:45</div>
<div class="t" style="font-size:12.5px;top:426.67px;right:979.10px;transform:scaleX(0.8675);transform-origin:100% 0;">256.865</div>
<div class="t" style="font-size:12.5px;top:426.67px;right:855.00px;transform:scaleX(0.9005);transform-origin:100% 0;">10/9/2023 10:00</div>
<div class="t" style="font-size:12.5px;top:426.67px;right:775.00px;transform:scaleX(0.8675);transform-origin:100% 0;">253.61</div>
<div class="t" style="font-size:12.5px;top:426.67px;color:#63e25c;right:641.00px;transform:scaleX(0.8551);transform-origin:100% 0;">162,744.06</div>
<div class="t" style="font-size:12.5px;top:426.67px;color:#63e25c;right:561.10px;transform:scaleX(0.8509);transform-origin:100% 0;">1,627.44</div>
<div class="t" style="font-size:12.5px;top:426.67px;right:481.00px;transform:scaleX(0.8685);transform-origin:100% 0;">78</div>
<div class="t" style="font-size:12.5px;top:426.67px;left:936.20px;transform:scaleX(0.9336);transform-origin:0 0;">Short 0% below Lowest(Low,29)</div>
<div class="t" style="font-size:12.5px;top:426.67px;left:1167.60px;transform:scaleX(0.9369);transform-origin:0 0;">Cover 0% above Highest(High,29)</div>
<svg style="left:24px;top:450px" width="13" height="11" viewBox="0 0 13 11"><path d="M0.6 0.6 L12.4 0.6 L6.5 10.4Z" fill="#a4f2a4" stroke="#058a10" stroke-width="1.1" stroke-linejoin="miter"/></svg>
<div class="t" style="font-size:12.5px;top:448.67px;left:42.20px;transform:scaleX(0.9506);transform-origin:0 0;">Short</div>
<div class="t" style="font-size:12.5px;top:448.67px;left:84.60px;transform:scaleX(0.8581);transform-origin:0 0;">@GF#C</div>
<div class="t" style="font-size:12.5px;top:448.67px;right:1194.00px;transform:scaleX(0.8685);transform-origin:100% 0;">1</div>
<div class="t" style="font-size:12.5px;top:448.67px;right:1059.60px;transform:scaleX(0.9005);transform-origin:100% 0;">3/10/2023 09:45</div>
<div class="t" style="font-size:12.5px;top:448.67px;right:979.10px;transform:scaleX(0.8675);transform-origin:100% 0;">230.315</div>
<div class="t" style="font-size:12.5px;top:448.67px;right:855.00px;transform:scaleX(0.9005);transform-origin:100% 0;">3/16/2023 12:45</div>
<div class="t" style="font-size:12.5px;top:448.67px;right:775.00px;transform:scaleX(0.8675);transform-origin:100% 0;">227.335</div>
<div class="t" style="font-size:12.5px;top:448.67px;color:#63e25c;right:641.00px;transform:scaleX(0.8551);transform-origin:100% 0;">148,994.06</div>
<div class="t" style="font-size:12.5px;top:448.67px;color:#63e25c;right:561.10px;transform:scaleX(0.8509);transform-origin:100% 0;">1,489.94</div>
<div class="t" style="font-size:12.5px;top:448.67px;right:481.00px;transform:scaleX(0.8685);transform-origin:100% 0;">89</div>
<div class="t" style="font-size:12.5px;top:448.67px;left:936.20px;transform:scaleX(0.9336);transform-origin:0 0;">Short 0% below Lowest(Low,29)</div>
<div class="t" style="font-size:12.5px;top:448.67px;left:1167.60px;transform:scaleX(0.9369);transform-origin:0 0;">Cover 0% above Highest(High,29)</div>
<svg style="left:24px;top:472px" width="13" height="11" viewBox="0 0 13 11"><path d="M0.6 0.6 L12.4 0.6 L6.5 10.4Z" fill="#a4f2a4" stroke="#058a10" stroke-width="1.1" stroke-linejoin="miter"/></svg>
<div class="t" style="font-size:12.5px;top:470.67px;left:42.20px;transform:scaleX(0.9506);transform-origin:0 0;">Short</div>
<div class="t" style="font-size:12.5px;top:470.67px;left:84.60px;transform:scaleX(0.8581);transform-origin:0 0;">@GF#C</div>
<div class="t" style="font-size:12.5px;top:470.67px;right:1194.00px;transform:scaleX(0.8685);transform-origin:100% 0;">1</div>
<div class="t" style="font-size:12.5px;top:470.67px;right:1059.60px;transform:scaleX(0.9005);transform-origin:100% 0;">7/5/2023 13:45</div>
<div class="t" style="font-size:12.5px;top:470.67px;right:979.10px;transform:scaleX(0.8675);transform-origin:100% 0;">256.84</div>
<div class="t" style="font-size:12.5px;top:470.67px;right:855.00px;transform:scaleX(0.9005);transform-origin:100% 0;">7/7/2023 12:30</div>
<div class="t" style="font-size:12.5px;top:470.67px;right:775.00px;transform:scaleX(0.8675);transform-origin:100% 0;">254.65</div>
<div class="t" style="font-size:12.5px;top:470.67px;color:#63e25c;right:641.00px;transform:scaleX(0.8551);transform-origin:100% 0;">109,494.06</div>
<div class="t" style="font-size:12.5px;top:470.67px;color:#63e25c;right:561.10px;transform:scaleX(0.8509);transform-origin:100% 0;">1,094.94</div>
<div class="t" style="font-size:12.5px;top:470.67px;right:481.00px;transform:scaleX(0.8685);transform-origin:100% 0;">34</div>
<div class="t" style="font-size:12.5px;top:470.67px;left:936.20px;transform:scaleX(0.9336);transform-origin:0 0;">Short 0% below Lowest(Low,29)</div>
<div class="t" style="font-size:12.5px;top:470.67px;left:1167.60px;transform:scaleX(0.9369);transform-origin:0 0;">Cover 0% above Highest(High,29)</div>
<svg style="left:24px;top:494px" width="13" height="11" viewBox="0 0 13 11"><path d="M0.6 0.6 L12.4 0.6 L6.5 10.4Z" fill="#a4f2a4" stroke="#058a10" stroke-width="1.1" stroke-linejoin="miter"/></svg>
<div class="t" style="font-size:12.5px;top:492.67px;left:42.20px;transform:scaleX(0.9506);transform-origin:0 0;">Short</div>
<div class="t" style="font-size:12.5px;top:492.67px;left:84.60px;transform:scaleX(0.8581);transform-origin:0 0;">@GF#C</div>
<div class="t" style="font-size:12.5px;top:492.67px;right:1194.00px;transform:scaleX(0.8685);transform-origin:100% 0;">1</div>
<div class="t" style="font-size:12.5px;top:492.67px;right:1059.60px;transform:scaleX(0.9005);transform-origin:100% 0;">8/14/2023 10:15</div>
<div class="t" style="font-size:12.5px;top:492.67px;right:979.10px;transform:scaleX(0.8675);transform-origin:100% 0;">258.715</div>
<div class="t" style="font-size:12.5px;top:492.67px;right:855.00px;transform:scaleX(0.9005);transform-origin:100% 0;">8/18/2023 14:00</div>
<div class="t" style="font-size:12.5px;top:492.67px;right:775.00px;transform:scaleX(0.8675);transform-origin:100% 0;">256.735</div>
<div class="t" style="font-size:12.5px;top:492.67px;color:#63e25c;right:641.00px;transform:scaleX(0.8551);transform-origin:100% 0;">98,994.06</div>
<div class="t" style="font-size:12.5px;top:492.67px;color:#63e25c;right:561.10px;transform:scaleX(0.8509);transform-origin:100% 0;">989.94</div>
<div class="t" style="font-size:12.5px;top:492.67px;right:481.00px;transform:scaleX(0.8685);transform-origin:100% 0;">92</div>
<div class="t" style="font-size:12.5px;top:492.67px;left:936.20px;transform:scaleX(0.9336);transform-origin:0 0;">Short 0% below Lowest(Low,29)</div>
<div class="t" style="font-size:12.5px;top:492.67px;left:1167.60px;transform:scaleX(0.9369);transform-origin:0 0;">Cover 0% above Highest(High,29)</div>
<svg style="left:24px;top:516px" width="13" height="11" viewBox="0 0 13 11"><path d="M0.6 0.6 L12.4 0.6 L6.5 10.4Z" fill="#a4f2a4" stroke="#058a10" stroke-width="1.1" stroke-linejoin="miter"/></svg>
<div class="t" style="font-size:12.5px;top:514.67px;left:42.20px;transform:scaleX(0.9506);transform-origin:0 0;">Short</div>
<div class="t" style="font-size:12.5px;top:514.67px;left:84.60px;transform:scaleX(0.8581);transform-origin:0 0;">@GF#C</div>
<div class="t" style="font-size:12.5px;top:514.67px;right:1194.00px;transform:scaleX(0.8685);transform-origin:100% 0;">1</div>
<div class="t" style="font-size:12.5px;top:514.67px;right:1059.60px;transform:scaleX(0.9005);transform-origin:100% 0;">10/23/2023 12:15</div>
<div class="t" style="font-size:12.5px;top:514.67px;right:979.10px;transform:scaleX(0.8675);transform-origin:100% 0;">238.64</div>
<div class="t" style="font-size:12.5px;top:514.67px;right:855.00px;transform:scaleX(0.9005);transform-origin:100% 0;">10/27/2023 12:15</div>
<div class="t" style="font-size:12.5px;top:514.67px;right:775.00px;transform:scaleX(0.8675);transform-origin:100% 0;">236.91</div>
<div class="t" style="font-size:12.5px;top:514.67px;color:#63e25c;right:641.00px;transform:scaleX(0.8551);transform-origin:100% 0;">86,494.06</div>
<div class="t" style="font-size:12.5px;top:514.67px;color:#63e25c;right:561.10px;transform:scaleX(0.8509);transform-origin:100% 0;">864.94</div>
<div class="t" style="font-size:12.5px;top:514.67px;right:481.00px;transform:scaleX(0.8685);transform-origin:100% 0;">77</div>
<div class="t" style="font-size:12.5px;top:514.67px;left:936.20px;transform:scaleX(0.9336);transform-origin:0 0;">Short 0% below Lowest(Low,29)</div>
<div class="t" style="font-size:12.5px;top:514.67px;left:1167.60px;transform:scaleX(0.9369);transform-origin:0 0;">Cover 0% above Highest(High,29)</div>
<svg style="left:24px;top:538px" width="13" height="11" viewBox="0 0 13 11"><path d="M0.6 0.6 L12.4 0.6 L6.5 10.4Z" fill="#a4f2a4" stroke="#058a10" stroke-width="1.1" stroke-linejoin="miter"/></svg>
<div class="t" style="font-size:12.5px;top:536.67px;left:42.20px;transform:scaleX(0.9506);transform-origin:0 0;">Short</div>
<div class="t" style="font-size:12.5px;top:536.67px;left:84.60px;transform:scaleX(0.8581);transform-origin:0 0;">@GF#C</div>
<div class="t" style="font-size:12.5px;top:536.67px;right:1194.00px;transform:scaleX(0.8685);transform-origin:100% 0;">1</div>
<div class="t" style="font-size:12.5px;top:536.67px;right:1059.60px;transform:scaleX(0.9005);transform-origin:100% 0;">6/7/2023 12:45</div>
<div class="t" style="font-size:12.5px;top:536.67px;right:979.10px;transform:scaleX(0.8675);transform-origin:100% 0;">251.915</div>
<div class="t" style="font-size:12.5px;top:536.67px;right:855.00px;transform:scaleX(0.9005);transform-origin:100% 0;">6/13/2023 13:45</div>
<div class="t" style="font-size:12.5px;top:536.67px;right:775.00px;transform:scaleX(0.8675);transform-origin:100% 0;">250.585</div>
<div class="t" style="font-size:12.5px;top:536.67px;color:#63e25c;right:641.00px;transform:scaleX(0.8551);transform-origin:100% 0;">66,494.06</div>
<div class="t" style="font-size:12.5px;top:536.67px;color:#63e25c;right:561.10px;transform:scaleX(0.8509);transform-origin:100% 0;">664.94</div>
<div class="t" style="font-size:12.5px;top:536.67px;right:481.00px;transform:scaleX(0.8685);transform-origin:100% 0;">81</div>
<div class="t" style="font-size:12.5px;top:536.67px;left:936.20px;transform:scaleX(0.9336);transform-origin:0 0;">Short 0% below Lowest(Low,29)</div>
<div class="t" style="font-size:12.5px;top:536.67px;left:1167.60px;transform:scaleX(0.9369);transform-origin:0 0;">Cover 0% above Highest(High,29)</div>
<svg style="left:24px;top:560px" width="13" height="11" viewBox="0 0 13 11"><path d="M0.6 0.6 L12.4 0.6 L6.5 10.4Z" fill="#a4f2a4" stroke="#058a10" stroke-width="1.1" stroke-linejoin="miter"/></svg>
<div class="t" style="font-size:12.5px;top:558.67px;left:42.20px;transform:scaleX(0.9506);transform-origin:0 0;">Short</div>
<div class="t" style="font-size:12.5px;top:558.67px;left:84.60px;transform:scaleX(0.8581);transform-origin:0 0;">@GF#C</div>
<div class="t" style="font-size:12.5px;top:558.67px;right:1194.00px;transform:scaleX(0.8685);transform-origin:100% 0;">1</div>
<div class="t" style="font-size:12.5px;top:558.67px;right:1059.60px;transform:scaleX(0.9005);transform-origin:100% 0;">8/7/2023 13:30</div>
<div class="t" style="font-size:12.5px;top:558.67px;right:979.10px;transform:scaleX(0.8675);transform-origin:100% 0;">260.065</div>
<div class="t" style="font-size:12.5px;top:558.67px;right:855.00px;transform:scaleX(0.9005);transform-origin:100% 0;">8/10/2023 10:15</div>
<div class="t" style="font-size:12.5px;top:558.67px;right:775.00px;transform:scaleX(0.8675);transform-origin:100% 0;">259.335</div>
<div class="t" style="font-size:12.5px;top:558.67px;color:#63e25c;right:641.00px;transform:scaleX(0.8551);transform-origin:100% 0;">36,494.06</div>
<div class="t" style="font-size:12.5px;top:558.67px;color:#63e25c;right:561.10px;transform:scaleX(0.8509);transform-origin:100% 0;">364.94</div>
<div class="t" style="font-size:12.5px;top:558.67px;right:481.00px;transform:scaleX(0.8685);transform-origin:100% 0;">45</div>
<div class="t" style="font-size:12.5px;top:558.67px;left:936.20px;transform:scaleX(0.9336);transform-origin:0 0;">Short 0% below Lowest(Low,29)</div>
<div class="t" style="font-size:12.5px;top:558.67px;left:1167.60px;transform:scaleX(0.9369);transform-origin:0 0;">Cover 0% above Highest(High,29)</div>
<div class="a" style="left:15px;top:577px;width:1355px;height:21px;background:#2b2b2b;border:1px solid #5c5c5c;border-right:none"></div>
<svg style="left:24px;top:582px" width="13" height="11" viewBox="0 0 13 11"><path d="M0.6 0.6 L12.4 0.6 L6.5 10.4Z" fill="#a4f2a4" stroke="#058a10" stroke-width="1.1" stroke-linejoin="miter"/></svg>
<div class="t" style="font-size:12.5px;top:580.67px;left:42.20px;transform:scaleX(0.9506);transform-origin:0 0;">Short</div>
<div class="t" style="font-size:12.5px;top:580.67px;left:84.60px;transform:scaleX(0.8581);transform-origin:0 0;">@GF#C</div>
<div class="t" style="font-size:12.5px;top:580.67px;right:1194.00px;transform:scaleX(0.8685);transform-origin:100% 0;">1</div>
<div class="t" style="font-size:12.5px;top:580.67px;right:1059.60px;transform:scaleX(0.9005);transform-origin:100% 0;">3/20/2023 13:30</div>
<div class="t" style="font-size:12.5px;top:580.67px;right:979.10px;transform:scaleX(0.8675);transform-origin:100% 0;">225.59</div>
<div class="t" style="font-size:12.5px;top:580.67px;right:855.00px;transform:scaleX(0.9005);transform-origin:100% 0;">3/27/2023 09:45</div>
<div class="t" style="font-size:12.5px;top:580.67px;right:775.00px;transform:scaleX(0.8675);transform-origin:100% 0;">225.16</div>
<div class="t" style="font-size:12.5px;top:580.67px;color:#63e25c;right:641.00px;transform:scaleX(0.8551);transform-origin:100% 0;">21,494.06</div>
<div class="t" style="font-size:12.5px;top:580.67px;color:#63e25c;right:561.10px;transform:scaleX(0.8509);transform-origin:100% 0;">214.94</div>
<div class="t" style="font-size:12.5px;top:580.67px;right:481.00px;transform:scaleX(0.8685);transform-origin:100% 0;">81</div>
<div class="t" style="font-size:12.5px;top:580.67px;left:936.20px;transform:scaleX(0.9336);transform-origin:0 0;">Short 0% below Lowest(Low,29)</div>
<div class="t" style="font-size:12.5px;top:580.67px;left:1167.60px;transform:scaleX(0.9369);transform-origin:0 0;">Cover 0% above Highest(High,29)</div>
<svg style="left:24px;top:604px" width="13" height="11" viewBox="0 0 13 11"><path d="M0.6 0.6 L12.4 0.6 L6.5 10.4Z" fill="#a4f2a4" stroke="#058a10" stroke-width="1.1" stroke-linejoin="miter"/></svg>
<div class="t" style="font-size:12.5px;top:602.67px;left:42.20px;transform:scaleX(0.9506);transform-origin:0 0;">Short</div>
<div class="t" style="font-size:12.5px;top:602.67px;left:84.60px;transform:scaleX(0.8581);transform-origin:0 0;">@GF#C</div>
<div class="t" style="font-size:12.5px;top:602.67px;right:1194.00px;transform:scaleX(0.8685);transform-origin:100% 0;">1</div>
<div class="t" style="font-size:12.5px;top:602.67px;right:1059.60px;transform:scaleX(0.9005);transform-origin:100% 0;">8/30/2023 10:00</div>
<div class="t" style="font-size:12.5px;top:602.67px;right:979.10px;transform:scaleX(0.8675);transform-origin:100% 0;">261.89</div>
<div class="t" style="font-size:12.5px;top:602.67px;right:855.00px;transform:scaleX(0.9005);transform-origin:100% 0;">9/6/2023 13:00</div>
<div class="t" style="font-size:12.5px;top:602.67px;right:775.00px;transform:scaleX(0.8675);transform-origin:100% 0;">261.86</div>
<div class="t" style="font-size:12.5px;top:602.67px;color:#63e25c;right:641.00px;transform:scaleX(0.8551);transform-origin:100% 0;">1,494.06</div>
<div class="t" style="font-size:12.5px;top:602.67px;color:#63e25c;right:561.10px;transform:scaleX(0.8509);transform-origin:100% 0;">14.94</div>
<div class="t" style="font-size:12.5px;top:602.67px;right:481.00px;transform:scaleX(0.8685);transform-origin:100% 0;">89</div>
<div class="t" style="font-size:12.5px;top:602.67px;left:936.20px;transform:scaleX(0.9336);transform-origin:0 0;">Short 0% below Lowest(Low,29)</div>
<div class="t" style="font-size:12.5px;top:602.67px;left:1167.60px;transform:scaleX(0.9369);transform-origin:0 0;">Cover 0% above Highest(High,29)</div>
<svg style="left:24px;top:626px" width="13" height="11" viewBox="0 0 13 11"><path d="M0.6 0.6 L12.4 0.6 L6.5 10.4Z" fill="#a4f2a4" stroke="#058a10" stroke-width="1.1" stroke-linejoin="miter"/></svg>
<div class="t" style="font-size:12.5px;top:624.67px;left:42.20px;transform:scaleX(0.9506);transform-origin:0 0;">Short</div>
<div class="t" style="font-size:12.5px;top:624.67px;left:84.60px;transform:scaleX(0.8581);transform-origin:0 0;">@GF#C</div>
<div class="t" style="font-size:12.5px;top:624.67px;right:1194.00px;transform:scaleX(0.8685);transform-origin:100% 0;">1</div>
<div class="t" style="font-size:12.5px;top:624.67px;right:1059.60px;transform:scaleX(0.9005);transform-origin:100% 0;">1/5/2023 13:15</div>
<div class="t" style="font-size:12.5px;top:624.67px;right:979.10px;transform:scaleX(0.8675);transform-origin:100% 0;">222.45</div>
<div class="t" style="font-size:12.5px;top:624.67px;right:855.00px;transform:scaleX(0.9005);transform-origin:100% 0;">1/10/2023 10:00</div>
<div class="t" style="font-size:12.5px;top:624.67px;right:775.00px;transform:scaleX(0.8675);transform-origin:100% 0;">222.635</div>
<div class="t" style="font-size:12.5px;top:624.67px;color:#ee6666;right:641.00px;transform:scaleX(0.8551);transform-origin:100% 0;">-9,255.94</div>
<div class="t" style="font-size:12.5px;top:624.67px;color:#ee6666;right:561.10px;transform:scaleX(0.8509);transform-origin:100% 0;">-92.56</div>
<div class="t" style="font-size:12.5px;top:624.67px;right:481.00px;transform:scaleX(0.8685);transform-origin:100% 0;">45</div>
<div class="t" style="font-size:12.5px;top:624.67px;left:936.20px;transform:scaleX(0.9336);transform-origin:0 0;">Short 0% below Lowest(Low,29)</div>
<div class="t" style="font-size:12.5px;top:624.67px;left:1167.60px;transform:scaleX(0.9369);transform-origin:0 0;">Cover 0% above Highest(High,29)</div>
<svg style="left:24px;top:648px" width="13" height="11" viewBox="0 0 13 11"><path d="M0.6 0.6 L12.4 0.6 L6.5 10.4Z" fill="#a4f2a4" stroke="#058a10" stroke-width="1.1" stroke-linejoin="miter"/></svg>
<div class="t" style="font-size:12.5px;top:646.67px;left:42.20px;transform:scaleX(0.9506);transform-origin:0 0;">Short</div>
<div class="t" style="font-size:12.5px;top:646.67px;left:84.60px;transform:scaleX(0.8581);transform-origin:0 0;">@GF#C</div>
<div class="t" style="font-size:12.5px;top:646.67px;right:1194.00px;transform:scaleX(0.8685);transform-origin:100% 0;">1</div>
<div class="t" style="font-size:12.5px;top:646.67px;right:1059.60px;transform:scaleX(0.9005);transform-origin:100% 0;">12/27/2022 10:00</div>
<div class="t" style="font-size:12.5px;top:646.67px;right:979.10px;transform:scaleX(0.8675);transform-origin:100% 0;">222.14</div>
<div class="t" style="font-size:12.5px;top:646.67px;right:855.00px;transform:scaleX(0.9005);transform-origin:100% 0;">12/28/2022 13:00</div>
<div class="t" style="font-size:12.5px;top:646.67px;right:775.00px;transform:scaleX(0.8675);transform-origin:100% 0;">222.375</div>
<div class="t" style="font-size:12.5px;top:646.67px;color:#ee6666;right:641.00px;transform:scaleX(0.8551);transform-origin:100% 0;">-11,755.94</div>
<div class="t" style="font-size:12.5px;top:646.67px;color:#ee6666;right:561.10px;transform:scaleX(0.8509);transform-origin:100% 0;">-117.56</div>
<div class="t" style="font-size:12.5px;top:646.67px;right:481.00px;transform:scaleX(0.8685);transform-origin:100% 0;">32</div>
<div class="t" style="font-size:12.5px;top:646.67px;left:936.20px;transform:scaleX(0.9336);transform-origin:0 0;">Short 0% below Lowest(Low,29)</div>
<div class="t" style="font-size:12.5px;top:646.67px;left:1167.60px;transform:scaleX(0.9369);transform-origin:0 0;">Cover 0% above Highest(High,29)</div>
<svg style="left:24px;top:670px" width="13" height="11" viewBox="0 0 13 11"><path d="M0.6 0.6 L12.4 0.6 L6.5 10.4Z" fill="#a4f2a4" stroke="#058a10" stroke-width="1.1" stroke-linejoin="miter"/></svg>
<div class="t" style="font-size:12.5px;top:668.67px;left:42.20px;transform:scaleX(0.9506);transform-origin:0 0;">Short</div>
<div class="t" style="font-size:12.5px;top:668.67px;left:84.60px;transform:scaleX(0.8581);transform-origin:0 0;">@GF#C</div>
<div class="t" style="font-size:12.5px;top:668.67px;right:1194.00px;transform:scaleX(0.8685);transform-origin:100% 0;">1</div>
<div class="t" style="font-size:12.5px;top:668.67px;right:1059.60px;transform:scaleX(0.9005);transform-origin:100% 0;">12/30/2022 11:00</div>
<div class="t" style="font-size:12.5px;top:668.67px;right:979.10px;transform:scaleX(0.8675);transform-origin:100% 0;">222.115</div>
<div class="t" style="font-size:12.5px;top:668.67px;right:855.00px;transform:scaleX(0.9005);transform-origin:100% 0;">1/4/2023 10:00</div>
<div class="t" style="font-size:12.5px;top:668.67px;right:775.00px;transform:scaleX(0.8675);transform-origin:100% 0;">222.41</div>
<div class="t" style="font-size:12.5px;top:668.67px;color:#ee6666;right:641.00px;transform:scaleX(0.8551);transform-origin:100% 0;">-14,755.94</div>
<div class="t" style="font-size:12.5px;top:668.67px;color:#ee6666;right:561.10px;transform:scaleX(0.8509);transform-origin:100% 0;">-147.56</div>
<div class="t" style="font-size:12.5px;top:668.67px;right:481.00px;transform:scaleX(0.8685);transform-origin:100% 0;">35</div>
<div class="t" style="font-size:12.5px;top:668.67px;left:936.20px;transform:scaleX(0.9336);transform-origin:0 0;">Short 0% below Lowest(Low,29)</div>
<div class="t" style="font-size:12.5px;top:668.67px;left:1167.60px;transform:scaleX(0.9369);transform-origin:0 0;">Cover 0% above Highest(High,29)</div>
<svg style="left:24px;top:692px" width="13" height="11" viewBox="0 0 13 11"><path d="M0.6 0.6 L12.4 0.6 L6.5 10.4Z" fill="#a4f2a4" stroke="#058a10" stroke-width="1.1" stroke-linejoin="miter"/></svg>
<div class="t" style="font-size:12.5px;top:690.67px;left:42.20px;transform:scaleX(0.9506);transform-origin:0 0;">Short</div>
<div class="t" style="font-size:12.5px;top:690.67px;left:84.60px;transform:scaleX(0.8581);transform-origin:0 0;">@GF#C</div>
<div class="t" style="font-size:12.5px;top:690.67px;right:1194.00px;transform:scaleX(0.8685);transform-origin:100% 0;">1</div>
<div class="t" style="font-size:12.5px;top:690.67px;right:1059.60px;transform:scaleX(0.9005);transform-origin:100% 0;">2/16/2023 12:45</div>
<div class="t" style="font-size:12.5px;top:690.67px;right:979.10px;transform:scaleX(0.8675);transform-origin:100% 0;">222.265</div>
<div class="t" style="font-size:12.5px;top:690.67px;right:855.00px;transform:scaleX(0.9005);transform-origin:100% 0;">2/21/2023 10:00</div>
<div class="t" style="font-size:12.5px;top:690.67px;right:775.00px;transform:scaleX(0.8675);transform-origin:100% 0;">222.86</div>
<div class="t" style="font-size:12.5px;top:690.67px;color:#ee6666;right:641.00px;transform:scaleX(0.8551);transform-origin:100% 0;">-29,755.94</div>
<div class="t" style="font-size:12.5px;top:690.67px;color:#ee6666;right:561.10px;transform:scaleX(0.8509);transform-origin:100% 0;">-297.56</div>
<div class="t" style="font-size:12.5px;top:690.67px;right:481.00px;transform:scaleX(0.8685);transform-origin:100% 0;">28</div>
<div class="t" style="font-size:12.5px;top:690.67px;left:936.20px;transform:scaleX(0.9336);transform-origin:0 0;">Short 0% below Lowest(Low,29)</div>
<div class="t" style="font-size:12.5px;top:690.67px;left:1167.60px;transform:scaleX(0.9369);transform-origin:0 0;">Cover 0% above Highest(High,29)</div>
<svg style="left:24px;top:714px" width="13" height="11" viewBox="0 0 13 11"><path d="M0.6 0.6 L12.4 0.6 L6.5 10.4Z" fill="#a4f2a4" stroke="#058a10" stroke-width="1.1" stroke-linejoin="miter"/></svg>
<div class="t" style="font-size:12.5px;top:712.67px;left:42.20px;transform:scaleX(0.9506);transform-origin:0 0;">Short</div>
<div class="t" style="font-size:12.5px;top:712.67px;left:84.60px;transform:scaleX(0.8581);transform-origin:0 0;">@GF#C</div>
<div class="t" style="font-size:12.5px;top:712.67px;right:1194.00px;transform:scaleX(0.8685);transform-origin:100% 0;">1</div>
<div class="t" style="font-size:12.5px;top:712.67px;right:1059.60px;transform:scaleX(0.9005);transform-origin:100% 0;">2/8/2023 14:00</div>
<div class="t" style="font-size:12.5px;top:712.67px;right:979.10px;transform:scaleX(0.8675);transform-origin:100% 0;">222.64</div>
<div class="t" style="font-size:12.5px;top:712.67px;right:855.00px;transform:scaleX(0.9005);transform-origin:100% 0;">2/10/2023 10:00</div>
<div class="t" style="font-size:12.5px;top:712.67px;right:775.00px;transform:scaleX(0.8675);transform-origin:100% 0;">223.46</div>
<div class="t" style="font-size:12.5px;top:712.67px;color:#ee6666;right:641.00px;transform:scaleX(0.8551);transform-origin:100% 0;">-41,005.94</div>
<div class="t" style="font-size:12.5px;top:712.67px;color:#ee6666;right:561.10px;transform:scaleX(0.8509);transform-origin:100% 0;">-410.06</div>
<div class="t" style="font-size:12.5px;top:712.67px;right:481.00px;transform:scaleX(0.8685);transform-origin:100% 0;">23</div>
<div class="t" style="font-size:12.5px;top:712.67px;left:936.20px;transform:scaleX(0.9336);transform-origin:0 0;">Short 0% below Lowest(Low,29)</div>
<div class="t" style="font-size:12.5px;top:712.67px;left:1167.60px;transform:scaleX(0.9369);transform-origin:0 0;">Cover 0% above Highest(High,29)</div>
<svg style="left:24px;top:736px" width="13" height="11" viewBox="0 0 13 11"><path d="M0.6 0.6 L12.4 0.6 L6.5 10.4Z" fill="#a4f2a4" stroke="#058a10" stroke-width="1.1" stroke-linejoin="miter"/></svg>
<div class="t" style="font-size:12.5px;top:734.67px;left:42.20px;transform:scaleX(0.9506);transform-origin:0 0;">Short</div>
<div class="t" style="font-size:12.5px;top:734.67px;left:84.60px;transform:scaleX(0.8581);transform-origin:0 0;">@GF#C</div>
<div class="t" style="font-size:12.5px;top:734.67px;right:1194.00px;transform:scaleX(0.8685);transform-origin:100% 0;">1</div>
<div class="t" style="font-size:12.5px;top:734.67px;right:1059.60px;transform:scaleX(0.9005);transform-origin:100% 0;">4/3/2023 11:00</div>
<div class="t" style="font-size:12.5px;top:734.67px;right:979.10px;transform:scaleX(0.8675);transform-origin:100% 0;">228.85</div>
<div class="t" style="font-size:12.5px;top:734.67px;right:855.00px;transform:scaleX(0.9005);transform-origin:100% 0;">4/3/2023 13:15</div>
<div class="t" style="font-size:12.5px;top:734.67px;right:775.00px;transform:scaleX(0.8675);transform-origin:100% 0;">229.735</div>
<div class="t" style="font-size:12.5px;top:734.67px;color:#ee6666;right:641.00px;transform:scaleX(0.8551);transform-origin:100% 0;">-44,255.94</div>
<div class="t" style="font-size:12.5px;top:734.67px;color:#ee6666;right:561.10px;transform:scaleX(0.8509);transform-origin:100% 0;">-442.56</div>
<div class="t" style="font-size:12.5px;top:734.67px;right:481.00px;transform:scaleX(0.8685);transform-origin:100% 0;">10</div>
<div class="t" style="font-size:12.5px;top:734.67px;left:936.20px;transform:scaleX(0.9336);transform-origin:0 0;">Short 0% below Lowest(Low,29)</div>
<div class="t" style="font-size:12.5px;top:734.67px;left:1167.60px;transform:scaleX(0.9167);transform-origin:0 0;">Cover 0% above Close</div>
<svg style="left:24px;top:758px" width="13" height="11" viewBox="0 0 13 11"><path d="M0.6 0.6 L12.4 0.6 L6.5 10.4Z" fill="#a4f2a4" stroke="#058a10" stroke-width="1.1" stroke-linejoin="miter"/></svg>
<div class="t" style="font-size:12.5px;top:756.67px;left:42.20px;transform:scaleX(0.9506);transform-origin:0 0;">Short</div>
<div class="t" style="font-size:12.5px;top:756.67px;left:84.60px;transform:scaleX(0.8581);transform-origin:0 0;">@GF#C</div>
<div class="t" style="font-size:12.5px;top:756.67px;right:1194.00px;transform:scaleX(0.8685);transform-origin:100% 0;">1</div>
<div class="t" style="font-size:12.5px;top:756.67px;right:1059.60px;transform:scaleX(0.9005);transform-origin:100% 0;">7/31/2023 12:30</div>
<div class="t" style="font-size:12.5px;top:756.67px;right:979.10px;transform:scaleX(0.8675);transform-origin:100% 0;">256.565</div>
<div class="t" style="font-size:12.5px;top:756.67px;right:855.00px;transform:scaleX(0.9005);transform-origin:100% 0;">7/31/2023 14:15</div>
<div class="t" style="font-size:12.5px;top:756.67px;right:775.00px;transform:scaleX(0.8675);transform-origin:100% 0;">257.46</div>
<div class="t" style="font-size:12.5px;top:756.67px;color:#ee6666;right:641.00px;transform:scaleX(0.8551);transform-origin:100% 0;">-44,755.94</div>
<div class="t" style="font-size:12.5px;top:756.67px;color:#ee6666;right:561.10px;transform:scaleX(0.8509);transform-origin:100% 0;">-447.56</div>
<div class="t" style="font-size:12.5px;top:756.67px;right:481.00px;transform:scaleX(0.8685);transform-origin:100% 0;">7</div>
<div class="t" style="font-size:12.5px;top:756.67px;left:936.20px;transform:scaleX(0.9336);transform-origin:0 0;">Short 0% below Lowest(Low,29)</div>
<div class="t" style="font-size:12.5px;top:756.67px;left:1167.60px;transform:scaleX(0.9167);transform-origin:0 0;">Cover 0% above Close</div>
<svg style="left:24px;top:780px" width="13" height="11" viewBox="0 0 13 11"><path d="M0.6 0.6 L12.4 0.6 L6.5 10.4Z" fill="#a4f2a4" stroke="#058a10" stroke-width="1.1" stroke-linejoin="miter"/></svg>
<div class="t" style="font-size:12.5px;top:778.67px;left:42.20px;transform:scaleX(0.9506);transform-origin:0 0;">Short</div>
<div class="t" style="font-size:12.5px;top:778.67px;left:84.60px;transform:scaleX(0.8581);transform-origin:0 0;">@GF#C</div>
<div class="t" style="font-size:12.5px;top:778.67px;right:1194.00px;transform:scaleX(0.8685);transform-origin:100% 0;">1</div>
<div class="t" style="font-size:12.5px;top:778.67px;right:1059.60px;transform:scaleX(0.9005);transform-origin:100% 0;">3/29/2023 09:45</div>
<div class="t" style="font-size:12.5px;top:778.67px;right:979.10px;transform:scaleX(0.8675);transform-origin:100% 0;">226.865</div>
<div class="t" style="font-size:12.5px;top:778.67px;right:855.00px;transform:scaleX(0.9005);transform-origin:100% 0;">3/29/2023 11:15</div>
<div class="t" style="font-size:12.5px;top:778.67px;right:775.00px;transform:scaleX(0.8675);transform-origin:100% 0;">227.785</div>
<div class="t" style="font-size:12.5px;top:778.67px;color:#ee6666;right:641.00px;transform:scaleX(0.8551);transform-origin:100% 0;">-46,005.94</div>
<div class="t" style="font-size:12.5px;top:778.67px;color:#ee6666;right:561.10px;transform:scaleX(0.8509);transform-origin:100% 0;">-460.06</div>
<div class="t" style="font-size:12.5px;top:778.67px;right:481.00px;transform:scaleX(0.8685);transform-origin:100% 0;">6</div>
<div class="t" style="font-size:12.5px;top:778.67px;left:936.20px;transform:scaleX(0.9336);transform-origin:0 0;">Short 0% below Lowest(Low,29)</div>
<div class="t" style="font-size:12.5px;top:778.67px;left:1167.60px;transform:scaleX(0.9167);transform-origin:0 0;">Cover 0% above Close</div>
<svg style="left:24px;top:802px" width="13" height="11" viewBox="0 0 13 11"><path d="M0.6 0.6 L12.4 0.6 L6.5 10.4Z" fill="#a4f2a4" stroke="#058a10" stroke-width="1.1" stroke-linejoin="miter"/></svg>
<div class="t" style="font-size:12.5px;top:800.67px;left:42.20px;transform:scaleX(0.9506);transform-origin:0 0;">Short</div>
<div class="t" style="font-size:12.5px;top:800.67px;left:84.60px;transform:scaleX(0.8581);transform-origin:0 0;">@GF#C</div>
<div class="t" style="font-size:12.5px;top:800.67px;right:1194.00px;transform:scaleX(0.8685);transform-origin:100% 0;">1</div>
<div class="t" style="font-size:12.5px;top:800.67px;right:1059.60px;transform:scaleX(0.9005);transform-origin:100% 0;">4/4/2023 14:00</div>
<div class="t" style="font-size:12.5px;top:800.67px;right:979.10px;transform:scaleX(0.8675);transform-origin:100% 0;">228.69</div>
<div class="t" style="font-size:12.5px;top:800.67px;right:855.00px;transform:scaleX(0.9005);transform-origin:100% 0;">4/5/2023 12:45</div>
<div class="t" style="font-size:12.5px;top:800.67px;right:775.00px;transform:scaleX(0.8675);transform-origin:100% 0;">229.635</div>
<div class="t" style="font-size:12.5px;top:800.67px;color:#ee6666;right:641.00px;transform:scaleX(0.8551);transform-origin:100% 0;">-47,255.94</div>
<div class="t" style="font-size:12.5px;top:800.67px;color:#ee6666;right:561.10px;transform:scaleX(0.8509);transform-origin:100% 0;">-472.56</div>
<div class="t" style="font-size:12.5px;top:800.67px;right:481.00px;transform:scaleX(0.8685);transform-origin:100% 0;">14</div>
<div class="t" style="font-size:12.5px;top:800.67px;left:936.20px;transform:scaleX(0.9336);transform-origin:0 0;">Short 0% below Lowest(Low,29)</div>
<div class="t" style="font-size:12.5px;top:800.67px;left:1167.60px;transform:scaleX(0.9167);transform-origin:0 0;">Cover 0% above Close</div>
<svg style="left:24px;top:824px" width="13" height="11" viewBox="0 0 13 11"><path d="M0.6 0.6 L12.4 0.6 L6.5 10.4Z" fill="#a4f2a4" stroke="#058a10" stroke-width="1.1" stroke-linejoin="miter"/></svg>
<div class="t" style="font-size:12.5px;top:822.67px;left:42.20px;transform:scaleX(0.9506);transform-origin:0 0;">Short</div>
<div class="t" style="font-size:12.5px;top:822.67px;left:84.60px;transform:scaleX(0.8581);transform-origin:0 0;">@GF#C</div>
<div class="t" style="font-size:12.5px;top:822.67px;right:1194.00px;transform:scaleX(0.8685);transform-origin:100% 0;">1</div>
<div class="t" style="font-size:12.5px;top:822.67px;right:1059.60px;transform:scaleX(0.9005);transform-origin:100% 0;">4/13/2023 14:00</div>
<div class="t" style="font-size:12.5px;top:822.67px;right:979.10px;transform:scaleX(0.8675);transform-origin:100% 0;">234.565</div>
<div class="t" style="font-size:12.5px;top:822.67px;right:855.00px;transform:scaleX(0.9005);transform-origin:100% 0;">4/17/2023 10:45</div>
<div class="t" style="font-size:12.5px;top:822.67px;right:775.00px;transform:scaleX(0.8675);transform-origin:100% 0;">235.535</div>
<div class="t" style="font-size:12.5px;top:822.67px;color:#ee6666;right:641.00px;transform:scaleX(0.8551);transform-origin:100% 0;">-48,505.94</div>
<div class="t" style="font-size:12.5px;top:822.67px;color:#ee6666;right:561.10px;transform:scaleX(0.8509);transform-origin:100% 0;">-485.06</div>
<div class="t" style="font-size:12.5px;top:822.67px;right:481.00px;transform:scaleX(0.8685);transform-origin:100% 0;">25</div>
<div class="t" style="font-size:12.5px;top:822.67px;left:936.20px;transform:scaleX(0.9336);transform-origin:0 0;">Short 0% below Lowest(Low,29)</div>
<div class="t" style="font-size:12.5px;top:822.67px;left:1167.60px;transform:scaleX(0.9167);transform-origin:0 0;">Cover 0% above Close</div>
<svg style="left:24px;top:846px" width="13" height="11" viewBox="0 0 13 11"><path d="M0.6 0.6 L12.4 0.6 L6.5 10.4Z" fill="#a4f2a4" stroke="#058a10" stroke-width="1.1" stroke-linejoin="miter"/></svg>
<div class="t" style="font-size:12.5px;top:844.67px;left:42.20px;transform:scaleX(0.9506);transform-origin:0 0;">Short</div>
<div class="t" style="font-size:12.5px;top:844.67px;left:84.60px;transform:scaleX(0.8581);transform-origin:0 0;">@GF#C</div>
<div class="t" style="font-size:12.5px;top:844.67px;right:1194.00px;transform:scaleX(0.8685);transform-origin:100% 0;">1</div>
<div class="t" style="font-size:12.5px;top:844.67px;right:1059.60px;transform:scaleX(0.9005);transform-origin:100% 0;">4/26/2023 10:00</div>
<div class="t" style="font-size:12.5px;top:844.67px;right:979.10px;transform:scaleX(0.8675);transform-origin:100% 0;">238.765</div>
<div class="t" style="font-size:12.5px;top:844.67px;right:855.00px;transform:scaleX(0.9005);transform-origin:100% 0;">4/26/2023 11:45</div>
<div class="t" style="font-size:12.5px;top:844.67px;right:775.00px;transform:scaleX(0.8675);transform-origin:100% 0;">239.76</div>
<div class="t" style="font-size:12.5px;top:844.67px;color:#ee6666;right:641.00px;transform:scaleX(0.8551);transform-origin:100% 0;">-49,755.94</div>
<div class="t" style="font-size:12.5px;top:844.67px;color:#ee6666;right:561.10px;transform:scaleX(0.8509);transform-origin:100% 0;">-497.56</div>
<div class="t" style="font-size:12.5px;top:844.67px;right:481.00px;transform:scaleX(0.8685);transform-origin:100% 0;">7</div>
<div class="t" style="font-size:12.5px;top:844.67px;left:936.20px;transform:scaleX(0.9336);transform-origin:0 0;">Short 0% below Lowest(Low,29)</div>
<div class="t" style="font-size:12.5px;top:844.67px;left:1167.60px;transform:scaleX(0.9167);transform-origin:0 0;">Cover 0% above Close</div>
<svg style="left:24px;top:868px" width="13" height="11" viewBox="0 0 13 11"><path d="M0.6 0.6 L12.4 0.6 L6.5 10.4Z" fill="#a4f2a4" stroke="#058a10" stroke-width="1.1" stroke-linejoin="miter"/></svg>
<div class="t" style="font-size:12.5px;top:866.67px;left:42.20px;transform:scaleX(0.9506);transform-origin:0 0;">Short</div>
<div class="t" style="font-size:12.5px;top:866.67px;left:84.60px;transform:scaleX(0.8581);transform-origin:0 0;">@GF#C</div>
<div class="t" style="font-size:12.5px;top:866.67px;right:1194.00px;transform:scaleX(0.8685);transform-origin:100% 0;">1</div>
<div class="t" style="font-size:12.5px;top:866.67px;right:1059.60px;transform:scaleX(0.9005);transform-origin:100% 0;">8/23/2023 09:45</div>
<div class="t" style="font-size:12.5px;top:866.67px;right:979.10px;transform:scaleX(0.8675);transform-origin:100% 0;">256.865</div>
<div class="t" style="font-size:12.5px;top:866.67px;right:855.00px;transform:scaleX(0.9005);transform-origin:100% 0;">8/23/2023 11:00</div>
<div class="t" style="font-size:12.5px;top:866.67px;right:775.00px;transform:scaleX(0.8675);transform-origin:100% 0;">257.885</div>
<div class="t" style="font-size:12.5px;top:866.67px;color:#ee6666;right:641.00px;transform:scaleX(0.8551);transform-origin:100% 0;">-51,005.94</div>
<div class="t" style="font-size:12.5px;top:866.67px;color:#ee6666;right:561.10px;transform:scaleX(0.8509);transform-origin:100% 0;">-510.06</div>
<div class="t" style="font-size:12.5px;top:866.67px;right:481.00px;transform:scaleX(0.8685);transform-origin:100% 0;">5</div>
<div class="t" style="font-size:12.5px;top:866.67px;left:936.20px;transform:scaleX(0.9336);transform-origin:0 0;">Short 0% below Lowest(Low,29)</div>
<div class="t" style="font-size:12.5px;top:866.67px;left:1167.60px;transform:scaleX(0.9167);transform-origin:0 0;">Cover 0% above Close</div>
<div class="a" style="left:1370px;top:229px;width:17px;height:658px;background:#2b2b2b;border-left:1px solid #555;border-right:1px solid #555"></div>
<div class="a" style="left:1370px;top:229px;width:17px;height:17px;background:#2b2b2b;border:1px solid #555"></div>
<svg style="left:1374px;top:235px" width="9" height="7" viewBox="0 0 9 7"><path d="M0.8 5.8 L4.5 1.8 L8.2 5.8" fill="none" stroke="#999" stroke-width="1.3"/></svg>
<div class="a" style="left:1371px;top:246px;width:15px;height:402px;background:#5a5a5a"></div>
<div class="a" style="left:1370px;top:870px;width:17px;height:17px;background:#2b2b2b;border:1px solid #555"></div>
<svg style="left:1374px;top:875px" width="9" height="7" viewBox="0 0 9 7"><path d="M0.8 1.2 L4.5 5.2 L8.2 1.2" fill="none" stroke="#999" stroke-width="1.3"/></svg>
<div class="a" style="left:15px;top:887px;width:1355px;height:17px;background:#2b2b2b;border-top:1px solid #555;border-bottom:1px solid #555"></div>
<div class="a" style="left:15px;top:887px;width:17px;height:17px;background:#2b2b2b;border:1px solid #555"></div>
<svg style="left:20px;top:891px" width="7" height="9" viewBox="0 0 7 9"><path d="M5.8 0.8 L1.8 4.5 L5.8 8.2" fill="none" stroke="#999" stroke-width="1.3"/></svg>
<div class="a" style="left:32px;top:888px;width:1010px;height:15px;background:#5a5a5a"></div>
<div class="a" style="left:1353px;top:887px;width:17px;height:17px;background:#2b2b2b;border:1px solid #555"></div>
<svg style="left:1358px;top:891px" width="7" height="9" viewBox="0 0 7 9"><path d="M1.2 0.8 L5.2 4.5 L1.2 8.2" fill="none" stroke="#999" stroke-width="1.3"/></svg>
<div class="a" style="left:3px;top:915px;width:1396px;height:22px;background:#262626;border-top:1px solid #5a5a5a"></div>
<div class="t" style="font-size:12.5px;top:918.67px;left:7.50px;transform:scaleX(0.9262);transform-origin:0 0;">1 Symbol(s) Loaded</div>
<div class="t" style="font-size:12.5px;top:918.67px;color:#63e25c;left:173.70px;transform:scaleX(0.9408);transform-origin:0 0;">Backtest Complete</div>
<div class="a" style="left:280px;top:919px;width:1.5px;height:15px;background:#8a9cbc"></div>
<div class="t" style="font-size:12.5px;top:918.67px;left:289.60px;transform:scaleX(0.9467);transform-origin:0 0;">Profit:</div>
<div class="t" style="font-size:12.5px;top:918.67px;color:#63e25c;left:325.30px;transform:scaleX(0.8736);transform-origin:0 0;">3,175,732.70 1,058.58%</div>
<div class="a" style="left:452px;top:919px;width:1.5px;height:15px;background:#8a9cbc"></div>
<div class="t" style="font-size:12.5px;top:918.67px;left:461.60px;transform:scaleX(0.9464);transform-origin:0 0;">Benchmark Profit:</div>
<div class="t" style="font-size:12.5px;top:918.67px;color:#63e25c;left:560.40px;transform:scaleX(0.8722);transform-origin:0 0;">74,903.48 24.97%</div>
</div></body></html>
